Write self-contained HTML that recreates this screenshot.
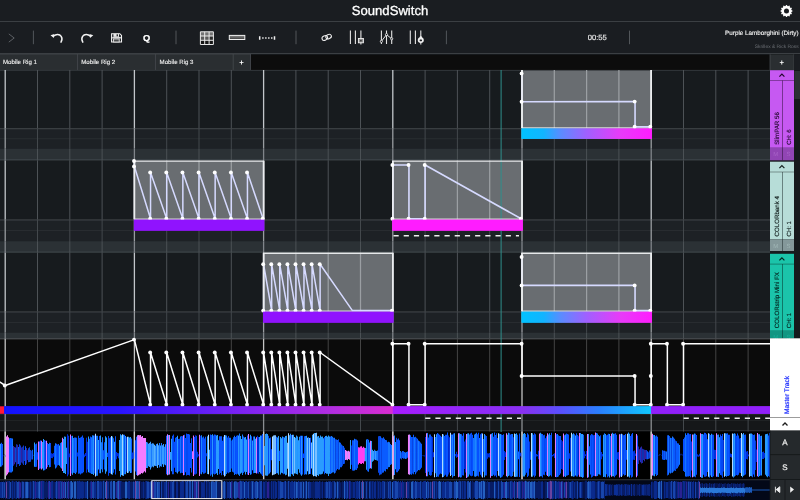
<!DOCTYPE html>
<html lang="en">
<head>
<meta charset="utf-8">
<title>SoundSwitch</title>
<style>
html,body{margin:0;padding:0;background:#171b1e;}
body{width:800px;height:500px;overflow:hidden;position:relative;font-family:"Liberation Sans",sans-serif;}
svg{position:absolute;left:0;top:0;display:block;will-change:transform;}
text{font-family:"Liberation Sans",sans-serif;text-rendering:geometricPrecision;}
</style>
</head>
<body>
<svg width="800" height="500" viewBox="0 0 800 500">
<defs>
<linearGradient id="gcm" x1="0" x2="1" y1="0" y2="0">
<stop offset="0" stop-color="#00c2ff"/><stop offset="0.17" stop-color="#12b4ff"/><stop offset="0.3" stop-color="#5a8cff"/><stop offset="0.5" stop-color="#a060ff"/><stop offset="0.75" stop-color="#e63cf8"/><stop offset="1" stop-color="#ff1cff"/>
</linearGradient>
<linearGradient id="gm1" x1="0" x2="1" y1="0" y2="0">
<stop offset="0" stop-color="#1212ff"/><stop offset="0.3" stop-color="#2a14ff"/><stop offset="0.6" stop-color="#7a22f4"/><stop offset="0.85" stop-color="#b42ee0"/><stop offset="1" stop-color="#d82cd0"/>
</linearGradient>
<linearGradient id="gm2" x1="0" x2="1" y1="0" y2="0">
<stop offset="0" stop-color="#a81cff"/><stop offset="0.5" stop-color="#9426fa"/><stop offset="1" stop-color="#8a30f4"/>
</linearGradient>
<linearGradient id="gm3" x1="0" x2="1" y1="0" y2="0">
<stop offset="0" stop-color="#8a30f0"/><stop offset="0.3" stop-color="#5a50ff"/><stop offset="0.6" stop-color="#2a80ff"/><stop offset="1" stop-color="#10c8ff"/>
</linearGradient>
<linearGradient id="gbar" x1="0" x2="0" y1="0" y2="1">
<stop offset="0" stop-color="#8a8a8a"/><stop offset="1" stop-color="#3a3a3a"/>
</linearGradient>
</defs>

<rect x="0" y="0" width="800" height="500" fill="#171b1e"/>
<rect x="0" y="0" width="800" height="54" fill="#1a1d21"/>
<rect x="0" y="21" width="800" height="1" fill="#3b3f43"/>
<rect x="0" y="54" width="800" height="1" fill="#15181b"/>
<rect x="0" y="55" width="800" height="15" fill="#0c0c0c"/>
<rect x="0" y="53" width="800" height="1" fill="#3b3f43"/>
<rect x="0" y="54.3" width="250.8" height="15.7" fill="#2a2e31"/>
<rect x="0" y="53.8" width="250.8" height="0.9" fill="#3d4145"/>
<rect x="77.15" y="54" width="0.9" height="16" fill="#43474b"/>
<rect x="154.95" y="54" width="0.9" height="16" fill="#43474b"/>
<rect x="232.75" y="54" width="0.9" height="16" fill="#43474b"/>
<rect x="249.95" y="54" width="0.9" height="16" fill="#43474b"/>
<rect x="770" y="54.5" width="24" height="15.7" fill="#2a2e31"/>
<rect x="769.6" y="54.3" width="0.9" height="16" fill="#43474b"/>
<rect x="793.4" y="54.3" width="0.8" height="16" fill="#3a3e42"/>
<rect x="794" y="54.5" width="6" height="15.5" fill="#1a1d21"/>
<rect x="0" y="70" width="770" height="58.4" fill="#171b1e"/>
<rect x="0" y="128.4" width="770" height="20.3" fill="#1d2125"/>
<rect x="0" y="148.7" width="770" height="11.9" fill="#2b3135"/>
<rect x="0" y="160.6" width="770" height="59" fill="#171b1e"/>
<rect x="0" y="219.6" width="770" height="21.6" fill="#1d2125"/>
<rect x="0" y="241.2" width="770" height="11.6" fill="#2b3135"/>
<rect x="0" y="252.8" width="770" height="58.8" fill="#171b1e"/>
<rect x="0" y="311.6" width="770" height="21" fill="#1d2125"/>
<rect x="0" y="332.6" width="770" height="6.2" fill="#2b3135"/>
<rect x="0" y="338.8" width="770" height="75" fill="#0b0b0b"/>
<rect x="0" y="414" width="770" height="17.5" fill="#151719"/>
<rect x="0" y="420.3" width="770" height="0.7" fill="#24272a"/>
<rect x="0" y="430.2" width="770" height="0.9" fill="#2c2f32"/>
<rect x="0" y="431.5" width="770" height="68.5" fill="#000"/>
<rect x="522" y="70" width="129.2" height="58.4" fill="#696d71"/>
<rect x="522" y="128.4" width="129.6" height="10.4" fill="url(#gcm)"/>
<rect x="134.4" y="160.6" width="129.2" height="59" fill="#696d71"/>
<rect x="134.4" y="219.6" width="129.6" height="11" fill="#9013fe"/>
<rect x="392.8" y="160.6" width="129.2" height="59" fill="#696d71"/>
<rect x="392.8" y="219.6" width="129.6" height="11" fill="#ff1cff"/>
<rect x="263.6" y="252.8" width="129.2" height="58.8" fill="#696d71"/>
<rect x="263.6" y="311.6" width="129.6" height="11" fill="#9013fe"/>
<rect x="522" y="252.8" width="129.2" height="58.8" fill="#696d71"/>
<rect x="522" y="311.6" width="129.6" height="11" fill="url(#gcm)"/>
<rect x="0" y="128.3" width="770" height="0.9" fill="#484d51"/>
<rect x="0" y="159.4" width="770" height="0.9" fill="#424a4e"/>
<rect x="0" y="138.4" width="770" height="0.8" fill="#2c3034"/>
<rect x="0" y="219.5" width="770" height="0.9" fill="#484d51"/>
<rect x="0" y="251.6" width="770" height="0.9" fill="#424a4e"/>
<rect x="0" y="230.2" width="770" height="0.8" fill="#2c3034"/>
<rect x="0" y="311.5" width="770" height="0.9" fill="#484d51"/>
<rect x="0" y="322.2" width="770" height="0.8" fill="#2c3034"/>
<rect x="0" y="338.4" width="770" height="0.9" fill="#5a5e62"/>
<rect x="0" y="69.9" width="770" height="0.8" fill="#3a3e42"/>
<rect x="0" y="413.8" width="770" height="0.8" fill="#2a2d30"/>
<rect x="4.55" y="70" width="1.3" height="58.4" fill="#c2c6ca"/>
<rect x="4.55" y="128.4" width="1.3" height="20.3" fill="#989ca0"/>
<rect x="4.55" y="148.7" width="1.3" height="11.9" fill="#80858a"/>
<rect x="4.55" y="160.6" width="1.3" height="59" fill="#c2c6ca"/>
<rect x="4.55" y="219.6" width="1.3" height="21.6" fill="#989ca0"/>
<rect x="4.55" y="241.2" width="1.3" height="11.6" fill="#80858a"/>
<rect x="4.55" y="252.8" width="1.3" height="58.8" fill="#c2c6ca"/>
<rect x="4.55" y="311.6" width="1.3" height="21" fill="#989ca0"/>
<rect x="4.55" y="332.6" width="1.3" height="6.2" fill="#80858a"/>
<rect x="4.55" y="338.8" width="1.3" height="75.2" fill="#c4c4c4"/>
<rect x="4.55" y="414" width="1.3" height="17.5" fill="#8a8e92"/>
<rect x="4.55" y="431.5" width="1.3" height="48" fill="#c8c8c8"/>
<rect x="37" y="70" width="1" height="58.4" fill="#4d5256"/>
<rect x="37" y="128.4" width="1" height="20.3" fill="#43484c"/>
<rect x="37" y="148.7" width="1" height="11.9" fill="#4b5155"/>
<rect x="37" y="160.6" width="1" height="59" fill="#4d5256"/>
<rect x="37" y="219.6" width="1" height="21.6" fill="#43484c"/>
<rect x="37" y="241.2" width="1" height="11.6" fill="#4b5155"/>
<rect x="37" y="252.8" width="1" height="58.8" fill="#4d5256"/>
<rect x="37" y="311.6" width="1" height="21" fill="#43484c"/>
<rect x="37" y="332.6" width="1" height="6.2" fill="#4b5155"/>
<rect x="37" y="338.8" width="1" height="75.2" fill="#444444"/>
<rect x="37" y="414" width="1" height="17.5" fill="#43484c"/>
<rect x="69.3" y="70" width="1" height="58.4" fill="#4d5256"/>
<rect x="69.3" y="128.4" width="1" height="20.3" fill="#43484c"/>
<rect x="69.3" y="148.7" width="1" height="11.9" fill="#4b5155"/>
<rect x="69.3" y="160.6" width="1" height="59" fill="#4d5256"/>
<rect x="69.3" y="219.6" width="1" height="21.6" fill="#43484c"/>
<rect x="69.3" y="241.2" width="1" height="11.6" fill="#4b5155"/>
<rect x="69.3" y="252.8" width="1" height="58.8" fill="#4d5256"/>
<rect x="69.3" y="311.6" width="1" height="21" fill="#43484c"/>
<rect x="69.3" y="332.6" width="1" height="6.2" fill="#4b5155"/>
<rect x="69.3" y="338.8" width="1" height="75.2" fill="#444444"/>
<rect x="69.3" y="414" width="1" height="17.5" fill="#43484c"/>
<rect x="101.6" y="70" width="1" height="58.4" fill="#4d5256"/>
<rect x="101.6" y="128.4" width="1" height="20.3" fill="#43484c"/>
<rect x="101.6" y="148.7" width="1" height="11.9" fill="#4b5155"/>
<rect x="101.6" y="160.6" width="1" height="59" fill="#4d5256"/>
<rect x="101.6" y="219.6" width="1" height="21.6" fill="#43484c"/>
<rect x="101.6" y="241.2" width="1" height="11.6" fill="#4b5155"/>
<rect x="101.6" y="252.8" width="1" height="58.8" fill="#4d5256"/>
<rect x="101.6" y="311.6" width="1" height="21" fill="#43484c"/>
<rect x="101.6" y="332.6" width="1" height="6.2" fill="#4b5155"/>
<rect x="101.6" y="338.8" width="1" height="75.2" fill="#444444"/>
<rect x="101.6" y="414" width="1" height="17.5" fill="#43484c"/>
<rect x="133.75" y="70" width="1.3" height="58.4" fill="#c2c6ca"/>
<rect x="133.75" y="128.4" width="1.3" height="20.3" fill="#989ca0"/>
<rect x="133.75" y="148.7" width="1.3" height="11.9" fill="#80858a"/>
<rect x="133.75" y="160.6" width="1.3" height="59" fill="#c2c6ca"/>
<rect x="133.75" y="219.6" width="1.3" height="21.6" fill="#989ca0"/>
<rect x="133.75" y="241.2" width="1.3" height="11.6" fill="#80858a"/>
<rect x="133.75" y="252.8" width="1.3" height="58.8" fill="#c2c6ca"/>
<rect x="133.75" y="311.6" width="1.3" height="21" fill="#989ca0"/>
<rect x="133.75" y="332.6" width="1.3" height="6.2" fill="#80858a"/>
<rect x="133.75" y="338.8" width="1.3" height="75.2" fill="#c4c4c4"/>
<rect x="133.75" y="414" width="1.3" height="17.5" fill="#8a8e92"/>
<rect x="133.75" y="431.5" width="1.3" height="48" fill="#c8c8c8"/>
<rect x="166.2" y="70" width="1" height="58.4" fill="#4d5256"/>
<rect x="166.2" y="128.4" width="1" height="20.3" fill="#43484c"/>
<rect x="166.2" y="148.7" width="1" height="11.9" fill="#4b5155"/>
<rect x="166.07" y="160.6" width="1.25" height="59" fill="#9b9fa3"/>
<rect x="166.2" y="219.6" width="1" height="21.6" fill="#43484c"/>
<rect x="166.2" y="241.2" width="1" height="11.6" fill="#4b5155"/>
<rect x="166.2" y="252.8" width="1" height="58.8" fill="#4d5256"/>
<rect x="166.2" y="311.6" width="1" height="21" fill="#43484c"/>
<rect x="166.2" y="332.6" width="1" height="6.2" fill="#4b5155"/>
<rect x="166.2" y="338.8" width="1" height="75.2" fill="#444444"/>
<rect x="166.2" y="414" width="1" height="17.5" fill="#43484c"/>
<rect x="198.5" y="70" width="1" height="58.4" fill="#4d5256"/>
<rect x="198.5" y="128.4" width="1" height="20.3" fill="#43484c"/>
<rect x="198.5" y="148.7" width="1" height="11.9" fill="#4b5155"/>
<rect x="198.37" y="160.6" width="1.25" height="59" fill="#9b9fa3"/>
<rect x="198.5" y="219.6" width="1" height="21.6" fill="#43484c"/>
<rect x="198.5" y="241.2" width="1" height="11.6" fill="#4b5155"/>
<rect x="198.5" y="252.8" width="1" height="58.8" fill="#4d5256"/>
<rect x="198.5" y="311.6" width="1" height="21" fill="#43484c"/>
<rect x="198.5" y="332.6" width="1" height="6.2" fill="#4b5155"/>
<rect x="198.5" y="338.8" width="1" height="75.2" fill="#444444"/>
<rect x="198.5" y="414" width="1" height="17.5" fill="#43484c"/>
<rect x="230.8" y="70" width="1" height="58.4" fill="#4d5256"/>
<rect x="230.8" y="128.4" width="1" height="20.3" fill="#43484c"/>
<rect x="230.8" y="148.7" width="1" height="11.9" fill="#4b5155"/>
<rect x="230.67" y="160.6" width="1.25" height="59" fill="#9b9fa3"/>
<rect x="230.8" y="219.6" width="1" height="21.6" fill="#43484c"/>
<rect x="230.8" y="241.2" width="1" height="11.6" fill="#4b5155"/>
<rect x="230.8" y="252.8" width="1" height="58.8" fill="#4d5256"/>
<rect x="230.8" y="311.6" width="1" height="21" fill="#43484c"/>
<rect x="230.8" y="332.6" width="1" height="6.2" fill="#4b5155"/>
<rect x="230.8" y="338.8" width="1" height="75.2" fill="#444444"/>
<rect x="230.8" y="414" width="1" height="17.5" fill="#43484c"/>
<rect x="262.95" y="70" width="1.3" height="58.4" fill="#c2c6ca"/>
<rect x="262.95" y="128.4" width="1.3" height="20.3" fill="#989ca0"/>
<rect x="262.95" y="148.7" width="1.3" height="11.9" fill="#80858a"/>
<rect x="262.95" y="160.6" width="1.3" height="59" fill="#c2c6ca"/>
<rect x="262.95" y="219.6" width="1.3" height="21.6" fill="#989ca0"/>
<rect x="262.95" y="241.2" width="1.3" height="11.6" fill="#80858a"/>
<rect x="262.95" y="252.8" width="1.3" height="58.8" fill="#c2c6ca"/>
<rect x="262.95" y="311.6" width="1.3" height="21" fill="#989ca0"/>
<rect x="262.95" y="332.6" width="1.3" height="6.2" fill="#80858a"/>
<rect x="262.95" y="338.8" width="1.3" height="75.2" fill="#c4c4c4"/>
<rect x="262.95" y="414" width="1.3" height="17.5" fill="#8a8e92"/>
<rect x="262.95" y="431.5" width="1.3" height="48" fill="#c8c8c8"/>
<rect x="295.4" y="70" width="1" height="58.4" fill="#4d5256"/>
<rect x="295.4" y="128.4" width="1" height="20.3" fill="#43484c"/>
<rect x="295.4" y="148.7" width="1" height="11.9" fill="#4b5155"/>
<rect x="295.4" y="160.6" width="1" height="59" fill="#4d5256"/>
<rect x="295.4" y="219.6" width="1" height="21.6" fill="#43484c"/>
<rect x="295.4" y="241.2" width="1" height="11.6" fill="#4b5155"/>
<rect x="295.27" y="252.8" width="1.25" height="58.8" fill="#9b9fa3"/>
<rect x="295.4" y="311.6" width="1" height="21" fill="#43484c"/>
<rect x="295.4" y="332.6" width="1" height="6.2" fill="#4b5155"/>
<rect x="295.4" y="338.8" width="1" height="75.2" fill="#444444"/>
<rect x="295.4" y="414" width="1" height="17.5" fill="#43484c"/>
<rect x="327.7" y="70" width="1" height="58.4" fill="#4d5256"/>
<rect x="327.7" y="128.4" width="1" height="20.3" fill="#43484c"/>
<rect x="327.7" y="148.7" width="1" height="11.9" fill="#4b5155"/>
<rect x="327.7" y="160.6" width="1" height="59" fill="#4d5256"/>
<rect x="327.7" y="219.6" width="1" height="21.6" fill="#43484c"/>
<rect x="327.7" y="241.2" width="1" height="11.6" fill="#4b5155"/>
<rect x="327.57" y="252.8" width="1.25" height="58.8" fill="#9b9fa3"/>
<rect x="327.7" y="311.6" width="1" height="21" fill="#43484c"/>
<rect x="327.7" y="332.6" width="1" height="6.2" fill="#4b5155"/>
<rect x="327.7" y="338.8" width="1" height="75.2" fill="#444444"/>
<rect x="327.7" y="414" width="1" height="17.5" fill="#43484c"/>
<rect x="360" y="70" width="1" height="58.4" fill="#4d5256"/>
<rect x="360" y="128.4" width="1" height="20.3" fill="#43484c"/>
<rect x="360" y="148.7" width="1" height="11.9" fill="#4b5155"/>
<rect x="360" y="160.6" width="1" height="59" fill="#4d5256"/>
<rect x="360" y="219.6" width="1" height="21.6" fill="#43484c"/>
<rect x="360" y="241.2" width="1" height="11.6" fill="#4b5155"/>
<rect x="359.87" y="252.8" width="1.25" height="58.8" fill="#9b9fa3"/>
<rect x="360" y="311.6" width="1" height="21" fill="#43484c"/>
<rect x="360" y="332.6" width="1" height="6.2" fill="#4b5155"/>
<rect x="360" y="338.8" width="1" height="75.2" fill="#444444"/>
<rect x="360" y="414" width="1" height="17.5" fill="#43484c"/>
<rect x="392.15" y="70" width="1.3" height="58.4" fill="#c2c6ca"/>
<rect x="392.15" y="128.4" width="1.3" height="20.3" fill="#989ca0"/>
<rect x="392.15" y="148.7" width="1.3" height="11.9" fill="#80858a"/>
<rect x="392.15" y="160.6" width="1.3" height="59" fill="#c2c6ca"/>
<rect x="392.15" y="219.6" width="1.3" height="21.6" fill="#989ca0"/>
<rect x="392.15" y="241.2" width="1.3" height="11.6" fill="#80858a"/>
<rect x="392.15" y="252.8" width="1.3" height="58.8" fill="#c2c6ca"/>
<rect x="392.15" y="311.6" width="1.3" height="21" fill="#989ca0"/>
<rect x="392.15" y="332.6" width="1.3" height="6.2" fill="#80858a"/>
<rect x="392.15" y="338.8" width="1.3" height="75.2" fill="#c4c4c4"/>
<rect x="392.15" y="414" width="1.3" height="17.5" fill="#8a8e92"/>
<rect x="392.15" y="431.5" width="1.3" height="48" fill="#c8c8c8"/>
<rect x="424.6" y="70" width="1" height="58.4" fill="#4d5256"/>
<rect x="424.6" y="128.4" width="1" height="20.3" fill="#43484c"/>
<rect x="424.6" y="148.7" width="1" height="11.9" fill="#4b5155"/>
<rect x="424.47" y="160.6" width="1.25" height="59" fill="#9b9fa3"/>
<rect x="424.6" y="219.6" width="1" height="21.6" fill="#43484c"/>
<rect x="424.6" y="241.2" width="1" height="11.6" fill="#4b5155"/>
<rect x="424.6" y="252.8" width="1" height="58.8" fill="#4d5256"/>
<rect x="424.6" y="311.6" width="1" height="21" fill="#43484c"/>
<rect x="424.6" y="332.6" width="1" height="6.2" fill="#4b5155"/>
<rect x="424.6" y="338.8" width="1" height="75.2" fill="#444444"/>
<rect x="424.6" y="414" width="1" height="17.5" fill="#43484c"/>
<rect x="456.9" y="70" width="1" height="58.4" fill="#4d5256"/>
<rect x="456.9" y="128.4" width="1" height="20.3" fill="#43484c"/>
<rect x="456.9" y="148.7" width="1" height="11.9" fill="#4b5155"/>
<rect x="456.77" y="160.6" width="1.25" height="59" fill="#9b9fa3"/>
<rect x="456.9" y="219.6" width="1" height="21.6" fill="#43484c"/>
<rect x="456.9" y="241.2" width="1" height="11.6" fill="#4b5155"/>
<rect x="456.9" y="252.8" width="1" height="58.8" fill="#4d5256"/>
<rect x="456.9" y="311.6" width="1" height="21" fill="#43484c"/>
<rect x="456.9" y="332.6" width="1" height="6.2" fill="#4b5155"/>
<rect x="456.9" y="338.8" width="1" height="75.2" fill="#444444"/>
<rect x="456.9" y="414" width="1" height="17.5" fill="#43484c"/>
<rect x="489.2" y="70" width="1" height="58.4" fill="#4d5256"/>
<rect x="489.2" y="128.4" width="1" height="20.3" fill="#43484c"/>
<rect x="489.2" y="148.7" width="1" height="11.9" fill="#4b5155"/>
<rect x="489.07" y="160.6" width="1.25" height="59" fill="#9b9fa3"/>
<rect x="489.2" y="219.6" width="1" height="21.6" fill="#43484c"/>
<rect x="489.2" y="241.2" width="1" height="11.6" fill="#4b5155"/>
<rect x="489.2" y="252.8" width="1" height="58.8" fill="#4d5256"/>
<rect x="489.2" y="311.6" width="1" height="21" fill="#43484c"/>
<rect x="489.2" y="332.6" width="1" height="6.2" fill="#4b5155"/>
<rect x="489.2" y="338.8" width="1" height="75.2" fill="#444444"/>
<rect x="489.2" y="414" width="1" height="17.5" fill="#43484c"/>
<rect x="521.35" y="70" width="1.3" height="58.4" fill="#c2c6ca"/>
<rect x="521.35" y="128.4" width="1.3" height="20.3" fill="#989ca0"/>
<rect x="521.35" y="148.7" width="1.3" height="11.9" fill="#80858a"/>
<rect x="521.35" y="160.6" width="1.3" height="59" fill="#c2c6ca"/>
<rect x="521.35" y="219.6" width="1.3" height="21.6" fill="#989ca0"/>
<rect x="521.35" y="241.2" width="1.3" height="11.6" fill="#80858a"/>
<rect x="521.35" y="252.8" width="1.3" height="58.8" fill="#c2c6ca"/>
<rect x="521.35" y="311.6" width="1.3" height="21" fill="#989ca0"/>
<rect x="521.35" y="332.6" width="1.3" height="6.2" fill="#80858a"/>
<rect x="521.35" y="338.8" width="1.3" height="75.2" fill="#c4c4c4"/>
<rect x="521.35" y="414" width="1.3" height="17.5" fill="#8a8e92"/>
<rect x="521.35" y="431.5" width="1.3" height="48" fill="#c8c8c8"/>
<rect x="553.67" y="70" width="1.25" height="58.4" fill="#9b9fa3"/>
<rect x="553.8" y="128.4" width="1" height="20.3" fill="#43484c"/>
<rect x="553.8" y="148.7" width="1" height="11.9" fill="#4b5155"/>
<rect x="553.8" y="160.6" width="1" height="59" fill="#4d5256"/>
<rect x="553.8" y="219.6" width="1" height="21.6" fill="#43484c"/>
<rect x="553.8" y="241.2" width="1" height="11.6" fill="#4b5155"/>
<rect x="553.67" y="252.8" width="1.25" height="58.8" fill="#9b9fa3"/>
<rect x="553.8" y="311.6" width="1" height="21" fill="#43484c"/>
<rect x="553.8" y="332.6" width="1" height="6.2" fill="#4b5155"/>
<rect x="553.8" y="338.8" width="1" height="75.2" fill="#444444"/>
<rect x="553.8" y="414" width="1" height="17.5" fill="#43484c"/>
<rect x="585.98" y="70" width="1.25" height="58.4" fill="#9b9fa3"/>
<rect x="586.1" y="128.4" width="1" height="20.3" fill="#43484c"/>
<rect x="586.1" y="148.7" width="1" height="11.9" fill="#4b5155"/>
<rect x="586.1" y="160.6" width="1" height="59" fill="#4d5256"/>
<rect x="586.1" y="219.6" width="1" height="21.6" fill="#43484c"/>
<rect x="586.1" y="241.2" width="1" height="11.6" fill="#4b5155"/>
<rect x="585.98" y="252.8" width="1.25" height="58.8" fill="#9b9fa3"/>
<rect x="586.1" y="311.6" width="1" height="21" fill="#43484c"/>
<rect x="586.1" y="332.6" width="1" height="6.2" fill="#4b5155"/>
<rect x="586.1" y="338.8" width="1" height="75.2" fill="#444444"/>
<rect x="586.1" y="414" width="1" height="17.5" fill="#43484c"/>
<rect x="618.27" y="70" width="1.25" height="58.4" fill="#9b9fa3"/>
<rect x="618.4" y="128.4" width="1" height="20.3" fill="#43484c"/>
<rect x="618.4" y="148.7" width="1" height="11.9" fill="#4b5155"/>
<rect x="618.4" y="160.6" width="1" height="59" fill="#4d5256"/>
<rect x="618.4" y="219.6" width="1" height="21.6" fill="#43484c"/>
<rect x="618.4" y="241.2" width="1" height="11.6" fill="#4b5155"/>
<rect x="618.27" y="252.8" width="1.25" height="58.8" fill="#9b9fa3"/>
<rect x="618.4" y="311.6" width="1" height="21" fill="#43484c"/>
<rect x="618.4" y="332.6" width="1" height="6.2" fill="#4b5155"/>
<rect x="618.4" y="338.8" width="1" height="75.2" fill="#444444"/>
<rect x="618.4" y="414" width="1" height="17.5" fill="#43484c"/>
<rect x="650.55" y="70" width="1.3" height="58.4" fill="#c2c6ca"/>
<rect x="650.55" y="128.4" width="1.3" height="20.3" fill="#989ca0"/>
<rect x="650.55" y="148.7" width="1.3" height="11.9" fill="#80858a"/>
<rect x="650.55" y="160.6" width="1.3" height="59" fill="#c2c6ca"/>
<rect x="650.55" y="219.6" width="1.3" height="21.6" fill="#989ca0"/>
<rect x="650.55" y="241.2" width="1.3" height="11.6" fill="#80858a"/>
<rect x="650.55" y="252.8" width="1.3" height="58.8" fill="#c2c6ca"/>
<rect x="650.55" y="311.6" width="1.3" height="21" fill="#989ca0"/>
<rect x="650.55" y="332.6" width="1.3" height="6.2" fill="#80858a"/>
<rect x="650.55" y="338.8" width="1.3" height="75.2" fill="#c4c4c4"/>
<rect x="650.55" y="414" width="1.3" height="17.5" fill="#8a8e92"/>
<rect x="650.55" y="431.5" width="1.3" height="48" fill="#c8c8c8"/>
<rect x="683" y="70" width="1" height="58.4" fill="#4d5256"/>
<rect x="683" y="128.4" width="1" height="20.3" fill="#43484c"/>
<rect x="683" y="148.7" width="1" height="11.9" fill="#4b5155"/>
<rect x="683" y="160.6" width="1" height="59" fill="#4d5256"/>
<rect x="683" y="219.6" width="1" height="21.6" fill="#43484c"/>
<rect x="683" y="241.2" width="1" height="11.6" fill="#4b5155"/>
<rect x="683" y="252.8" width="1" height="58.8" fill="#4d5256"/>
<rect x="683" y="311.6" width="1" height="21" fill="#43484c"/>
<rect x="683" y="332.6" width="1" height="6.2" fill="#4b5155"/>
<rect x="683" y="338.8" width="1" height="75.2" fill="#444444"/>
<rect x="683" y="414" width="1" height="17.5" fill="#43484c"/>
<rect x="715.3" y="70" width="1" height="58.4" fill="#4d5256"/>
<rect x="715.3" y="128.4" width="1" height="20.3" fill="#43484c"/>
<rect x="715.3" y="148.7" width="1" height="11.9" fill="#4b5155"/>
<rect x="715.3" y="160.6" width="1" height="59" fill="#4d5256"/>
<rect x="715.3" y="219.6" width="1" height="21.6" fill="#43484c"/>
<rect x="715.3" y="241.2" width="1" height="11.6" fill="#4b5155"/>
<rect x="715.3" y="252.8" width="1" height="58.8" fill="#4d5256"/>
<rect x="715.3" y="311.6" width="1" height="21" fill="#43484c"/>
<rect x="715.3" y="332.6" width="1" height="6.2" fill="#4b5155"/>
<rect x="715.3" y="338.8" width="1" height="75.2" fill="#444444"/>
<rect x="715.3" y="414" width="1" height="17.5" fill="#43484c"/>
<rect x="747.6" y="70" width="1" height="58.4" fill="#4d5256"/>
<rect x="747.6" y="128.4" width="1" height="20.3" fill="#43484c"/>
<rect x="747.6" y="148.7" width="1" height="11.9" fill="#4b5155"/>
<rect x="747.6" y="160.6" width="1" height="59" fill="#4d5256"/>
<rect x="747.6" y="219.6" width="1" height="21.6" fill="#43484c"/>
<rect x="747.6" y="241.2" width="1" height="11.6" fill="#4b5155"/>
<rect x="747.6" y="252.8" width="1" height="58.8" fill="#4d5256"/>
<rect x="747.6" y="311.6" width="1" height="21" fill="#43484c"/>
<rect x="747.6" y="332.6" width="1" height="6.2" fill="#4b5155"/>
<rect x="747.6" y="338.8" width="1" height="75.2" fill="#444444"/>
<rect x="747.6" y="414" width="1" height="17.5" fill="#43484c"/>
<rect x="521.7" y="128.4" width="130.1" height="10.4" fill="url(#gcm)"/>
<rect x="134.1" y="219.6" width="130.1" height="11" fill="#9013fe"/>
<rect x="392.5" y="219.6" width="130.1" height="11" fill="#ff1cff"/>
<rect x="263.3" y="311.6" width="130.1" height="11" fill="#9013fe"/>
<rect x="521.7" y="311.6" width="130.1" height="11" fill="url(#gcm)"/>
<rect x="500.6" y="70" width="1" height="362" fill="#2f8f8c"/>
<path d="M522 128V70M651.2 70V128" fill="none" stroke="#e6e8ea" stroke-width="1.4"/>
<path d="M522 127.9H651.2" fill="none" stroke="#f4f4f4" stroke-width="1"/>
<path d="M134.4 219.2V161.1H263.6V219.2" fill="none" stroke="#e6e8ea" stroke-width="1.4"/>
<path d="M134.4 219.1H263.6" fill="none" stroke="#f4f4f4" stroke-width="1"/>
<path d="M392.8 219.2V161.1H522V219.2" fill="none" stroke="#e6e8ea" stroke-width="1.4"/>
<path d="M392.8 219.1H522" fill="none" stroke="#f4f4f4" stroke-width="1"/>
<path d="M263.6 311.2V253.3H392.8V311.2" fill="none" stroke="#e6e8ea" stroke-width="1.4"/>
<path d="M263.6 311.1H392.8" fill="none" stroke="#f4f4f4" stroke-width="1"/>
<path d="M522 311.2V253.3H651.2V311.2" fill="none" stroke="#e6e8ea" stroke-width="1.4"/>
<path d="M522 311.1H651.2" fill="none" stroke="#f4f4f4" stroke-width="1"/>
<polyline points="134.4,161 134.4,166.5 150.55,218.8 150.55,172.5 166.7,218.8 166.7,172.5 182.85,218.8 182.85,172.5 199,218.8 199,172.5 215.15,218.8 215.15,172.5 231.3,218.8 231.3,172.5 247.45,218.8 247.45,172.5 263.1,218.8" fill="none" stroke="#d6daff" stroke-width="1.5" stroke-linejoin="round"/>
<polyline points="392.8,218.8 392.8,165" fill="none" stroke="#d6daff" stroke-width="1.5" stroke-linejoin="round"/>
<polyline points="392.8,165 408.95,165 408.95,218.8 425.1,218.8 425.1,165 521.2,218.8" fill="none" stroke="#d6daff" stroke-width="1.6" stroke-linejoin="round"/>
<polyline points="522,73.4 522,101.7 635.05,101.6 635.05,126.8 650.7,126.8" fill="none" stroke="#d6daff" stroke-width="1.6" stroke-linejoin="round"/>
<polyline points="263.6,310.6 263.6,264.3 271.67,310.6 271.67,264.3 279.75,310.6 279.75,264.3 287.82,310.6 287.82,264.3 295.9,310.6 295.9,264.3 303.97,310.6 303.97,264.3 312.05,310.6 312.05,264.3 320.12,310.6 320.12,264.3 352.42,310.6 392.3,310.6" fill="none" stroke="#d6daff" stroke-width="1.5" stroke-linejoin="round"/>
<polyline points="522,257 522,285.4 635.05,285.4 635.05,310.6 650.7,310.6" fill="none" stroke="#d6daff" stroke-width="1.6" stroke-linejoin="round"/>
<path d="M522 128V70M651.2 70V128" fill="none" stroke="#eceef0" stroke-width="1.5"/>
<path d="M134.4 219.2V160.9M263.6 160.9V219.2" fill="none" stroke="#eceef0" stroke-width="1.5"/>
<path d="M392.8 219.2V160.9M522 160.9V219.2" fill="none" stroke="#eceef0" stroke-width="1.5"/>
<path d="M263.6 311.2V253.1M392.8 253.1V311.2" fill="none" stroke="#eceef0" stroke-width="1.5"/>
<path d="M522 311.2V253.1M651.2 253.1V311.2" fill="none" stroke="#eceef0" stroke-width="1.5"/>
<circle cx="134" cy="161" r="1.95" fill="#fff"/>
<circle cx="134" cy="166.5" r="1.95" fill="#fff"/>
<circle cx="150.15" cy="218.8" r="1.95" fill="#fff"/>
<circle cx="150.15" cy="172.5" r="1.95" fill="#fff"/>
<circle cx="166.3" cy="218.8" r="1.95" fill="#fff"/>
<circle cx="166.3" cy="172.5" r="1.95" fill="#fff"/>
<circle cx="182.45" cy="218.8" r="1.95" fill="#fff"/>
<circle cx="182.45" cy="172.5" r="1.95" fill="#fff"/>
<circle cx="198.6" cy="218.8" r="1.95" fill="#fff"/>
<circle cx="198.6" cy="172.5" r="1.95" fill="#fff"/>
<circle cx="214.75" cy="218.8" r="1.95" fill="#fff"/>
<circle cx="214.75" cy="172.5" r="1.95" fill="#fff"/>
<circle cx="230.9" cy="218.8" r="1.95" fill="#fff"/>
<circle cx="230.9" cy="172.5" r="1.95" fill="#fff"/>
<circle cx="247.05" cy="218.8" r="1.95" fill="#fff"/>
<circle cx="247.05" cy="172.5" r="1.95" fill="#fff"/>
<circle cx="262.7" cy="218.8" r="1.95" fill="#fff"/>
<circle cx="392.4" cy="165" r="1.95" fill="#fff"/>
<circle cx="408.55" cy="165" r="1.95" fill="#fff"/>
<circle cx="408.55" cy="218.8" r="1.95" fill="#fff"/>
<circle cx="424.7" cy="218.8" r="1.95" fill="#fff"/>
<circle cx="424.7" cy="165" r="1.95" fill="#fff"/>
<circle cx="520.8" cy="218.8" r="1.95" fill="#fff"/>
<circle cx="392.4" cy="218.8" r="1.95" fill="#fff"/>
<circle cx="521.6" cy="73.4" r="1.95" fill="#fff"/>
<circle cx="521.6" cy="101.7" r="1.95" fill="#fff"/>
<circle cx="634.65" cy="101.6" r="1.95" fill="#fff"/>
<circle cx="634.65" cy="126.8" r="1.95" fill="#fff"/>
<circle cx="650.3" cy="126.8" r="1.95" fill="#fff"/>
<circle cx="263.2" cy="310.6" r="1.95" fill="#fff"/>
<circle cx="263.2" cy="264.3" r="1.95" fill="#fff"/>
<circle cx="271.27" cy="310.6" r="1.95" fill="#fff"/>
<circle cx="271.27" cy="264.3" r="1.95" fill="#fff"/>
<circle cx="279.35" cy="310.6" r="1.95" fill="#fff"/>
<circle cx="279.35" cy="264.3" r="1.95" fill="#fff"/>
<circle cx="287.43" cy="310.6" r="1.95" fill="#fff"/>
<circle cx="287.43" cy="264.3" r="1.95" fill="#fff"/>
<circle cx="295.5" cy="310.6" r="1.95" fill="#fff"/>
<circle cx="295.5" cy="264.3" r="1.95" fill="#fff"/>
<circle cx="303.57" cy="310.6" r="1.95" fill="#fff"/>
<circle cx="303.57" cy="264.3" r="1.95" fill="#fff"/>
<circle cx="311.65" cy="310.6" r="1.95" fill="#fff"/>
<circle cx="311.65" cy="264.3" r="1.95" fill="#fff"/>
<circle cx="319.72" cy="310.6" r="1.95" fill="#fff"/>
<circle cx="319.72" cy="264.3" r="1.95" fill="#fff"/>
<circle cx="391.9" cy="310.6" r="1.95" fill="#fff"/>
<circle cx="521.6" cy="257" r="1.95" fill="#fff"/>
<circle cx="521.6" cy="285.4" r="1.95" fill="#fff"/>
<circle cx="634.65" cy="285.4" r="1.95" fill="#fff"/>
<circle cx="634.65" cy="310.6" r="1.95" fill="#fff"/>
<circle cx="650.3" cy="310.6" r="1.95" fill="#fff"/>
<rect x="521.4" y="128.5" width="130.5" height="10.3" fill="url(#gcm)"/>
<rect x="133.8" y="219.7" width="130.5" height="10.9" fill="#9013fe"/>
<rect x="392.2" y="219.7" width="130.5" height="10.9" fill="#ff1cff"/>
<rect x="263" y="311.7" width="130.5" height="10.9" fill="#9013fe"/>
<rect x="521.4" y="311.7" width="130.5" height="10.9" fill="url(#gcm)"/>
<path d="M393.5 235.8H519" stroke="#ececec" stroke-width="1.4" stroke-dasharray="5.2 5" fill="none"/>
<rect x="0" y="406.3" width="4.4" height="7.5" fill="#ff1838"/>
<rect x="4.2" y="406.3" width="388.6" height="7.5" fill="url(#gm1)"/>
<rect x="392.8" y="406.3" width="129.2" height="7.5" fill="url(#gm2)"/>
<rect x="522" y="406.3" width="129.2" height="7.5" fill="url(#gm3)"/>
<rect x="651.2" y="406.3" width="118.8" height="7.5" fill="#9120fa"/>
<polyline points="-1,381.5 5.2,385.5 134.4,339.6 150.55,404.8 150.55,352.5 166.7,404.8 166.7,352.5 182.85,404.8 182.85,352.5 199,404.8 199,352.5 215.15,404.8 215.15,352.5 231.3,404.8 231.3,352.5 247.45,404.8 247.45,352.5 263.6,404.8 263.6,352.5 271.67,404.8 271.67,352.5 279.75,404.8 279.75,352.5 287.82,404.8 287.82,352.5 295.9,404.8 295.9,352.5 303.97,404.8 303.97,352.5 312.05,404.8 312.05,352.5 320.12,404.8 320.12,352.5 392.8,404.8 392.8,343.7 408.95,343.7 408.95,404.8 425.1,404.8 425.1,343.7 522,343.7 522,376 635.05,376 635.05,404.8 651.2,404.8 651.2,376 651.2,343.7 667.35,343.7 667.35,404.8 683.5,404.8 683.5,343.7 771,343.7" fill="none" stroke="#ffffff" stroke-width="1.5" stroke-linejoin="round"/>
<circle cx="4.8" cy="385.5" r="1.95" fill="#fff"/>
<circle cx="134" cy="339.6" r="1.95" fill="#fff"/>
<circle cx="150.15" cy="404.8" r="1.95" fill="#fff"/>
<circle cx="150.15" cy="352.5" r="1.95" fill="#fff"/>
<circle cx="166.3" cy="404.8" r="1.95" fill="#fff"/>
<circle cx="166.3" cy="352.5" r="1.95" fill="#fff"/>
<circle cx="182.45" cy="404.8" r="1.95" fill="#fff"/>
<circle cx="182.45" cy="352.5" r="1.95" fill="#fff"/>
<circle cx="198.6" cy="404.8" r="1.95" fill="#fff"/>
<circle cx="198.6" cy="352.5" r="1.95" fill="#fff"/>
<circle cx="214.75" cy="404.8" r="1.95" fill="#fff"/>
<circle cx="214.75" cy="352.5" r="1.95" fill="#fff"/>
<circle cx="230.9" cy="404.8" r="1.95" fill="#fff"/>
<circle cx="230.9" cy="352.5" r="1.95" fill="#fff"/>
<circle cx="247.05" cy="404.8" r="1.95" fill="#fff"/>
<circle cx="247.05" cy="352.5" r="1.95" fill="#fff"/>
<circle cx="263.2" cy="404.8" r="1.95" fill="#fff"/>
<circle cx="263.2" cy="352.5" r="1.95" fill="#fff"/>
<circle cx="271.27" cy="404.8" r="1.95" fill="#fff"/>
<circle cx="271.27" cy="352.5" r="1.95" fill="#fff"/>
<circle cx="279.35" cy="404.8" r="1.95" fill="#fff"/>
<circle cx="279.35" cy="352.5" r="1.95" fill="#fff"/>
<circle cx="287.43" cy="404.8" r="1.95" fill="#fff"/>
<circle cx="287.43" cy="352.5" r="1.95" fill="#fff"/>
<circle cx="295.5" cy="404.8" r="1.95" fill="#fff"/>
<circle cx="295.5" cy="352.5" r="1.95" fill="#fff"/>
<circle cx="303.57" cy="404.8" r="1.95" fill="#fff"/>
<circle cx="303.57" cy="352.5" r="1.95" fill="#fff"/>
<circle cx="311.65" cy="404.8" r="1.95" fill="#fff"/>
<circle cx="311.65" cy="352.5" r="1.95" fill="#fff"/>
<circle cx="319.72" cy="404.8" r="1.95" fill="#fff"/>
<circle cx="319.72" cy="352.5" r="1.95" fill="#fff"/>
<circle cx="392.4" cy="404.8" r="1.95" fill="#fff"/>
<circle cx="392.4" cy="343.7" r="1.95" fill="#fff"/>
<circle cx="408.55" cy="343.7" r="1.95" fill="#fff"/>
<circle cx="408.55" cy="404.8" r="1.95" fill="#fff"/>
<circle cx="424.7" cy="404.8" r="1.95" fill="#fff"/>
<circle cx="424.7" cy="343.7" r="1.95" fill="#fff"/>
<circle cx="521.6" cy="343.7" r="1.95" fill="#fff"/>
<circle cx="521.6" cy="376" r="1.95" fill="#fff"/>
<circle cx="634.65" cy="376" r="1.95" fill="#fff"/>
<circle cx="634.65" cy="404.8" r="1.95" fill="#fff"/>
<circle cx="650.8" cy="404.8" r="1.95" fill="#fff"/>
<circle cx="650.8" cy="376" r="1.95" fill="#fff"/>
<circle cx="650.8" cy="343.7" r="1.95" fill="#fff"/>
<circle cx="666.95" cy="343.7" r="1.95" fill="#fff"/>
<circle cx="666.95" cy="404.8" r="1.95" fill="#fff"/>
<circle cx="683.1" cy="404.8" r="1.95" fill="#fff"/>
<circle cx="683.1" cy="343.7" r="1.95" fill="#fff"/>
<rect x="4.2" y="406.3" width="388.6" height="7.5" fill="url(#gm1)"/>
<rect x="392.8" y="406.3" width="129.2" height="7.5" fill="url(#gm2)"/>
<rect x="522" y="406.3" width="129.2" height="7.5" fill="url(#gm3)"/>
<rect x="651.2" y="406.3" width="118.8" height="7.5" fill="#9120fa"/>
<path d="M425.2 418.2H521" stroke="#ececec" stroke-width="1.4" stroke-dasharray="5.2 5" fill="none"/>
<path d="M683.6 418.2H770" stroke="#ececec" stroke-width="1.4" stroke-dasharray="5.2 5" fill="none"/>
<path d="M0.5 443.81V466.7M34.5 442.62V466.74M42.5 441.93V468.59M43.5 438.88V470.4M59.5 445.46V465.66M61.5 442.16V468.55M63.5 438.93V473.03M65.5 436.64V473.9M66.5 447.66V464.01M72.5 435.73V474.86M88.5 436.53V472.32M93.5 435.39V475.01M98.5 440.05V469.48M100.5 435.57V473.28M106.5 437.52V471.57M114.5 441.68V469.16M119.5 439.9V470.93M121.5 435.32V475.03M123.5 434.67V475.89M125.5 435.92V474.32M128.5 436.78V472.76M129.5 437.46V471.35M130.5 436.97V473.03M168.5 435.02V474.74M170.5 451.97V459.66M171.5 438.82V471.34M177.5 435.85V473.42M207.5 436.26V473.97M209.5 449.64V459.3M212.5 434.3V476.63M216.5 435.47V473.35M217.5 435.08V475.02M218.5 440.25V469M238.5 435.53V474.85M240.5 435.98V473.7M241.5 439.06V472.69M244.5 437.43V471.74M245.5 437.07V474.53M246.5 439.51V472.03M250.5 434.66V474.85M252.5 440.56V470.33M254.5 436.48V472.97M255.5 438.82V472.98M259.5 437.04V471.9M260.5 435.54V473.44M264.5 445.9V465.29M265.5 434.04V475.48M267.5 434.01V475.64M269.5 438.16V473.5M277.5 437.56V473.3M278.5 436.05V474.64M280.5 437.08V474.43M281.5 438.13V472.74M282.5 436.45V473.17M284.5 437.51V473.82M285.5 435.9V475.15M286.5 435.85V474.63M289.5 435.34V476.46M290.5 433.65V476.44M293.5 434.75V475.95M295.5 437.67V473.61M296.5 435.47V473.94M298.5 440.35V469.28M299.5 436.73V472.7M301.5 435.86V475.78M306.5 435.66V474.42M312.5 434.83V474.64M314.5 433.07V475.97M317.5 436.44V474.91M318.5 435.96V475.93M319.5 437.83V474.16M320.5 435.58V474.43M321.5 436.82V474.29M322.5 436.59V473.76M323.5 438.29V471.48M325.5 435.88V472.96M326.5 435.74V473.65M327.5 436.71V473.8M328.5 435.6V475.88M329.5 436.46V473.68M350.5 439.94V469.02M365.5 448.06V461.13M366.5 439.41V469.8M371.5 441V468.8M395.5 442.03V469.35M454.5 433.22V475.91M459.5 433.19V476.7M468.5 433.22V476.38M484.5 433.88V477.3M507.5 434.7V477.28M508.5 432.76V476.08M515.5 433.88V477.11M524.5 433.02V476.56M540.5 432.85V476.23M575.5 435.62V475.57M581.5 433.88V476.93M582.5 434.12V477.7M588.5 434.09V477.35M599.5 436.36V474.52M603.5 434.76V477.12M609.5 433.97V477.61M613.5 433.63V476.22M629.5 433.78V477.5M654.5 435.02V476.33M711.5 433.85V477.08M719.5 437.32V473.31M734.5 433.19V476.56M750.5 433.56V476.05M751.5 433.59V476.19M761.5 435.72V475.39M765.5 434.35V474.63M766.5 434.04V476.19" stroke="#2a9cff" stroke-width="1.05" fill="none"/>
<path d="M1.5 442.87V466.61M35.5 444.37V467.09M37.5 452.2V459.64M60.5 443.11V467.58M82.5 435.62V473.24M90.5 436.59V473.3M109.5 438.3V472.94M124.5 434.67V474.19M174.5 441.73V467.71M178.5 439.07V471.63M188.5 434.03V474.97M189.5 434.5V475.38M190.5 442.93V468.08M202.5 437.45V472.25M204.5 438.41V473.56M235.5 437.03V474.12M237.5 435.24V473.77M243.5 436.43V472.88M253.5 436.41V473.36M271.5 449.24V460.18M276.5 436.76V473.15M279.5 450.64V461.08M300.5 435.66V474.53M303.5 453.53V458M324.5 436.99V474.31M438.5 433.65V476.82M439.5 434.65V474.41M440.5 435.85V473.51M441.5 436.68V473.98M472.5 434.7V475.74M477.5 434.3V475.73M478.5 432.86V476.46M497.5 437.95V470.98M510.5 434.56V476.38M519.5 433.62V477.04M527.5 433.18V476.97M530.5 451.56V459.76M545.5 438.28V471.8M559.5 436.05V475M566.5 433.5V475.8M568.5 434.42V475.04M574.5 434.34V476.47M607.5 434.72V477.14M608.5 433.85V476.31M610.5 435.9V475.26M614.5 433.68V477.28M615.5 433.24V475.63M626.5 450.05V459.63M631.5 434.24V477.57M683.5 438.91V471.1M687.5 433.32V476.38M690.5 433.97V477.18M703.5 434.6V474.76M704.5 432.8V476.63M706.5 434.19V476.35M707.5 439.23V471.95M727.5 433.28V476M738.5 435.54V474.68M740.5 437.98V473.06M745.5 434.58V474.47M753.5 435.02V474.44M760.5 436.09V475.53" stroke="#0650ff" stroke-width="1.05" fill="none"/>
<path d="M2.5 443.88V465.21M36.5 443.46V466.68M44.5 439.97V470.35M74.5 437.41V473.09M89.5 438.83V472.71M131.5 438.38V472.82M172.5 435.73V474.15M194.5 436.95V474.42M205.5 436.71V472.83M220.5 436.23V473.12M221.5 436.19V475.18M357.5 440.52V468.34M398.5 438.59V470.71M429.5 434.43V474.91M430.5 434.61V475.74M447.5 432.6V476.43M461.5 434.24V477.27M463.5 433.31V475.53M469.5 434.48V474.45M470.5 433.52V475.66M485.5 435.34V475.48M495.5 435.11V475.41M501.5 434.45V477.22M503.5 434.19V474.85M511.5 433.92V476.7M517.5 434.76V476.79M525.5 434.05V474.77M535.5 434.28V475.82M543.5 435.16V474.81M551.5 432.75V476.41M576.5 433.3V476.45M583.5 434.7V477.28M590.5 435.33V474.5M598.5 435.03V474.35M622.5 434.14V475.65M624.5 434.91V475.38M632.5 433.04V476.85M656.5 435.54V476.05M657.5 436.84V475.12M688.5 433.14V476.46M728.5 434.81V476.11M752.5 434.29V477.25M754.5 434.44V476.63M768.5 435.53V475.96" stroke="#0a58ff" stroke-width="1.05" fill="none"/>
<path d="M3.5 455.13V456.32M4.5 454.37V455.14M5.5 455.18V456.66M33.5 454.68V455.88M422.5 455.04V455.74M423.5 455.04V456.16M424.5 455.09V456.78M658.5 455.04V455.72M659.5 454.12V455.73M660.5 454.28V455.02M661.5 455.23V456.03M680.5 453.64V455.5M681.5 453.69V455.32M682.5 454.29V455.79" stroke="#061a60" stroke-width="1.05" fill="none"/>
<path d="M6.5 436.38V475.54M7.5 435.37V474.35M8.5 437.37V472.42M138.5 435.01V475.24M139.5 435.32V474.4M140.5 435.05V474.16M141.5 436.66V473.09M142.5 436.07V473.56M143.5 437.98V472.6M144.5 437.96V471.36M145.5 437.88V472.51M345.5 450.11V459.98M346.5 450.69V459.73M348.5 450.72V459.04M349.5 451.58V459.73M392.5 435.08V476.25M393.5 436.22V475.16M408.5 434.83V474.26M651.5 435.58V476.02M652.5 433.87V475.61" stroke="#f47cff" stroke-width="1.05" fill="none"/>
<path d="M9.5 438.36V472.27M10.5 437.97V472.58M11.5 438.26V472.52M18.5 447.12V464.1M25.5 446.34V465.09M32.5 449.69V459.55M39.5 441.4V468.66M40.5 440.6V468.4M330.5 436.56V474.03M333.5 437.69V472.14M336.5 439.41V470.54M337.5 439.96V468.98M340.5 442.86V467.27M341.5 444.43V467.13M343.5 445.98V463.91M380.5 436.16V474.56M382.5 438.2V472.79M383.5 437.18V472.52M384.5 438.85V470.81M385.5 439.92V471.5M386.5 440.22V469.03M387.5 442.24V469.28M390.5 443.91V465.07M402.5 450.9V458.02M403.5 451.2V458.81M404.5 452.02V458.56M406.5 452.09V458.75M407.5 451.45V457.63M410.5 435.36V474.19M411.5 437.11V474.7M413.5 434.72V474.23M415.5 436.65V474.31M417.5 438.7V471.29M419.5 441.25V470.14M420.5 442.38V469.34M421.5 443.83V467.63M647.5 451.24V459.16M650.5 451.48V457.76M662.5 450.36V459.59M664.5 450.77V459.95M673.5 437.62V471.57M674.5 438.78V470.6M676.5 441.21V468.71M677.5 443.35V468.2M678.5 443.51V466.39" stroke="#0a5cff" stroke-width="1.05" fill="none"/>
<path d="M12.5 438.58V471.59M147.5 442.59V467.96M151.5 443.75V467.43M156.5 444.06V466.16M159.5 442.88V467.49M161.5 442.88V466.71M164.5 446.85V464.44M331.5 436.03V473.23M332.5 436.86V472.47M334.5 437.87V473.62M339.5 442.19V469.48M374.5 449.75V459.58M376.5 451.01V460.28M377.5 450.56V460.75M388.5 441.83V467.25M389.5 442.33V467.11M391.5 445.09V464.37M400.5 450.94V458.54M405.5 452.42V459.08M414.5 437.24V472.02M418.5 440.42V469.92M666.5 451.45V459.83M668.5 435.23V474.72M670.5 437.85V473.54M672.5 436.45V472.64M679.5 445.07V464.76" stroke="#1778ff" stroke-width="1.05" fill="none"/>
<path d="M13.5 446V465.75M14.5 446.97V464.37M17.5 444.79V464.24M21.5 447.51V462.41M26.5 447.88V463.76M27.5 450.21V460.07M638.5 446.51V464.05M639.5 449.14V460.27M641.5 446.4V463.54M644.5 449.86V461.37M645.5 449.99V458.88" stroke="#3420a0" stroke-width="1.05" fill="none"/>
<path d="M15.5 447.6V462.16M19.5 444.21V465.94M28.5 448.18V462.2M29.5 447.26V461.95M30.5 450.11V461.63M649.5 450.49V458.57" stroke="#0a48d8" stroke-width="1.05" fill="none"/>
<path d="M16.5 444.15V466.99M22.5 446.78V463.48M31.5 450.66V459.57M642.5 448.74V463.01M643.5 449.34V460.02" stroke="#1030b0" stroke-width="1.05" fill="none"/>
<path d="M20.5 445.57V465.06M23.5 445.41V464.91M24.5 449.92V461.12M640.5 447.51V462.27M646.5 450.12V459.32M648.5 452.14V459.01" stroke="#1238c8" stroke-width="1.05" fill="none"/>
<path d="M38.5 441.53V470.05M41.5 440.65V469.56M62.5 437.8V471.05M169.5 435.12V474.47M192.5 451.23V459.09M193.5 435.4V476.01M370.5 440.76V468.14" stroke="#e070ff" stroke-width="1.05" fill="none"/>
<path d="M45.5 440.77V469.58M77.5 452.43V456.6M94.5 435.51V473.4M206.5 453.22V456.19M231.5 440.47V468.4M433.5 452.37V457.19M449.5 437.23V472.5M529.5 441.48V468.42M569.5 453.14V458.74M570.5 437.86V471.48M594.5 434.9V475.97M691.5 441.39V470.6M739.5 438.59V472.64M755.5 440.55V470.03M756.5 449.38V462.05" stroke="#0434dc" stroke-width="1.05" fill="none"/>
<path d="M46.5 440.8V468.84M70.5 434.38V475.97M167.5 434.24V475.17M183.5 435.24V475.36M199.5 434.76V476.03M248.5 434.06V474.89M256.5 437.34V473.5M426.5 433.32V476.19M458.5 433.35V477.14M466.5 433.97V477.94M490.5 434.15V477.82M506.5 433.23V476.16M539.5 433.62V476.78M547.5 433.29V476.03M555.5 433.11V477.04M563.5 433.43V476.79M579.5 433.03V476.8M587.5 434.02V477.63M595.5 432.52V476.37M611.5 433.72V476.72M619.5 434.13V477.47M636.5 434.03V477.24M692.5 434.55V477.37M700.5 433.37V477.03M716.5 433.22V476.84M757.5 433.09V476.35" stroke="#e87cff" stroke-width="1.05" fill="none"/>
<path d="M47.5 443.01V466.94M54.5 445.8V464.5M56.5 443.79V467.57M58.5 444.07V465.01M76.5 437.8V472.43M78.5 435.66V473.63M79.5 438.06V473.57M80.5 437.41V474.56M81.5 436.64V473.51M83.5 437.63V472.24M103.5 450.25V459.6M104.5 442.15V469.47M107.5 452.7V457.07M110.5 437.24V473.54M113.5 438.22V472.77M115.5 436.31V474.49M135.5 440.35V471.51M136.5 436.69V475.03M166.5 435.83V474.37M175.5 437.71V472.04M176.5 436.9V472.61M182.5 436.15V472.99M184.5 434.7V475.09M185.5 438.1V472.13M191.5 438.22V472.49M203.5 436.59V473.83M210.5 434.39V475.72M214.5 434.45V474.52M215.5 434.73V474.12M219.5 436.17V474.24M222.5 440.7V471.12M223.5 436.82V474.95M233.5 437.37V472.57M236.5 435.8V474.61M247.5 435.47V474.48M249.5 438.86V473.09M261.5 435.54V474.58M262.5 434.05V476.08M263.5 435.36V475.44M302.5 435.87V474.42M304.5 436.13V474.81M352.5 440.24V470.54M353.5 440.13V470.85M355.5 439.36V469.76M356.5 439.53V470.1M397.5 439.41V472.17M399.5 440.26V469.2M428.5 437.44V471.86M435.5 436.89V473.32M437.5 432.94V476.56M444.5 436.02V475.69M446.5 434.71V476.84M451.5 434.4V474.98M480.5 434.36V474.66M481.5 433.33V476.6M483.5 439.09V471.67M493.5 436.63V474.85M494.5 432.54V476.34M526.5 437.27V472.77M528.5 434.5V475.8M533.5 434.82V475.42M542.5 434.04V477.52M546.5 436.16V474.99M556.5 434.3V477.15M560.5 435.94V473.61M564.5 435.36V476.27M567.5 434.04V475.42M589.5 446.2V464.76M592.5 434.53V476.86M616.5 434.85V474.78M620.5 434.14V476.58M625.5 433.9V474.97M637.5 435.44V475.67M684.5 437.46V472.08M686.5 435.04V476.74M696.5 434.9V474.65M710.5 434.88V475.53M720.5 434.42V474.92M737.5 433.42V475.58" stroke="#0854ff" stroke-width="1.05" fill="none"/>
<path d="M48.5 443.97V465.12M49.5 442.71V467.23M55.5 443.3V468.38M73.5 437.91V472.83M75.5 437.51V474.09M91.5 437.17V473.9M92.5 435.33V474.05M96.5 435.64V475.78M97.5 435.84V475.8M101.5 442.2V469.3M102.5 437.27V472.3M180.5 436.55V473.31M226.5 435.42V474.08M229.5 437.69V472.35M230.5 437.69V471.91M232.5 439.6V471.7M234.5 435.83V475.08M239.5 433.57V475.94M305.5 435.99V474.26M308.5 437.2V474.47M354.5 438.84V470.52M368.5 439.67V471.87M369.5 442.4V468.67M427.5 433.12V476.14M473.5 438.07V471.01M474.5 434.39V476.49M476.5 432.65V476.25M479.5 438V471.66M492.5 433V476.08M499.5 433.73V476.35M512.5 433.99V476.12M518.5 451.51V459.28M522.5 435.54V475.43M541.5 433.83V476.26M557.5 434.02V476.94M596.5 432.97V476.3M597.5 433.49V476.08M604.5 433.21V476.84M653.5 435.11V475.86M685.5 433.27V476.48M709.5 433.82V477.56M726.5 433.45V476.78M758.5 434.22V476.91" stroke="#1474ff" stroke-width="1.05" fill="none"/>
<path d="M50.5 442.97V466.88M57.5 444.61V465.43M99.5 436.05V473.2M108.5 435.88V475.65M173.5 434.57V474.26M179.5 438.77V471.29M181.5 436.1V472.8M186.5 433.5V475.4M187.5 433.89V475.04M196.5 435.72V473.71M211.5 435.05V474.4M213.5 435.48V473.84M227.5 437.38V472.57M228.5 436.11V473.3M251.5 436.24V474.2M268.5 435.8V474.39M270.5 437.45V472.18M283.5 437.08V474.19M291.5 434.95V473.93M310.5 437.86V473.98M367.5 438.92V471.32M396.5 437.86V472.23M431.5 436.32V475.34M445.5 434.63V474.76M453.5 433.51V476.13M462.5 435.74V475.24M471.5 432.8V476.27M486.5 436.1V475.49M496.5 433.23V477.22M502.5 434.95V476.46M509.5 433.22V475.59M534.5 433.36V477.35M544.5 434.77V475.35M550.5 435.06V475.13M558.5 435.17V476.6M577.5 435.09V476.58M591.5 434.03V477.54M593.5 435.22V475.69M600.5 435.16V475.21M606.5 435.27V474.29M623.5 435.2V474.15M630.5 436.05V475.29M655.5 436.24V474.15M689.5 434.19V476.06M695.5 433.76V477.33M705.5 432.95V476.7M712.5 434.42V477.28M713.5 434.66V476.33M721.5 435.9V475.53M722.5 433.91V477.63M729.5 434.75V475.27M735.5 433.85V475.77M736.5 435.69V475.09M744.5 434.79V475.25M769.5 433.08V476.97" stroke="#0448f4" stroke-width="1.05" fill="none"/>
<path d="M51.5 453.28V457.89M52.5 453.84V458.13M53.5 453.08V456.82M84.5 454.42V457.19M85.5 453.1V456.12M116.5 451.89V459.3M117.5 452.88V456.16M118.5 453.22V458.28M132.5 452.55V459.14M133.5 450.59V458.46M134.5 452.27V458.56M197.5 451.79V457.52M198.5 454.17V456.23M455.5 454.02V456.36M456.5 451.84V457.69M457.5 454.37V457.07M487.5 453.2V458.68M488.5 453.57V457.22M489.5 453.11V457.38M504.5 451.1V459.9M505.5 452.23V457.07M520.5 452.77V456.17M521.5 452.51V457.63M536.5 454.05V456.39M537.5 454.77V456.33M538.5 450.7V459.13M552.5 454.93V456.61M553.5 454.09V455.72M554.5 453.29V457.9M584.5 451.13V458.2M585.5 454.28V455.93M586.5 451.07V459.36M601.5 452V459.15M602.5 453.98V456.43M617.5 452.28V459.2M618.5 451.88V459.96M633.5 451.24V459.85M634.5 450.38V459.96M635.5 453.44V456.02M697.5 454.13V456.58M698.5 455.24V456.73M699.5 453.86V456.31M714.5 449.68V459.12M715.5 449.96V459.59M730.5 453.6V457.09M731.5 454.06V457.41M746.5 451.49V459.11M747.5 451.01V459.55M748.5 454.53V456.27M762.5 452V458.96M763.5 451.58V458.88M764.5 453.06V457.85" stroke="#0030dc" stroke-width="1.05" fill="none"/>
<path d="M64.5 436.4V473.08M105.5 436.35V473.67M112.5 436.55V474.66M120.5 434.23V476.66M225.5 435.14V475.63M266.5 433.5V475.7M297.5 436.59V474.52M436.5 434.28V477.05M500.5 434.08V477.81M516.5 433.28V476.65M523.5 433.68V476.39M532.5 433.31V476.7M549.5 433.24V476.29M565.5 434.44V476.97M573.5 433.15V476.68M605.5 434.12V477.16M628.5 432.46V476.45M694.5 433.62V476.45M702.5 434.12V477.79M742.5 434.26V477.18M743.5 433.12V475.81M759.5 434.13V476.06" stroke="#2496ff" stroke-width="1.05" fill="none"/>
<path d="M67.5 434.24V476.16M68.5 435.81V474.4M71.5 436.03V473.38M86.5 437.73V472.71M87.5 441.82V469.54M195.5 435.24V474.59M200.5 435.83V473.86M257.5 435.81V473.17M258.5 436.94V473.71" stroke="#002cd8" stroke-width="1.05" fill="none"/>
<path d="M69.5 453.57V457.22M126.5 437.23V471.81M351.5 445.62V464.7M425.5 436.91V472.98M432.5 437.08V472.1M448.5 435.43V474.4M464.5 441.47V468.94M465.5 439.56V472.44M513.5 437.25V471.64M561.5 440.05V469.04M562.5 441.22V469.72M578.5 436.35V474.83M723.5 440.1V471.46" stroke="#0028d0" stroke-width="1.05" fill="none"/>
<path d="M95.5 433.85V476.59M111.5 436.09V474.35M127.5 436.85V473.1M208.5 434.83V474.31M224.5 435.01V476.43M272.5 436.38V475.14M288.5 433.22V476.41M313.5 433.81V476.13M434.5 434.28V477.18M442.5 433.95V477.16M450.5 432.81V476.08M482.5 433.49V477.48M498.5 433.16V475.86M514.5 433.48V476.81M531.5 432.92V476.65M571.5 432.7V476.37M627.5 433.8V476.82M708.5 433.32V476.71M724.5 433.2V476.8M732.5 433.6V476.55M741.5 433.05V475.96M749.5 433.8V476.73" stroke="#b8dcff" stroke-width="1.05" fill="none"/>
<path d="M122.5 434.29V475.45M621.5 433.66V477.1" stroke="#a8d4ff" stroke-width="1.05" fill="none"/>
<path d="M137.5 435.31V475.79M347.5 451.19V460.14M409.5 434.52V474.86" stroke="#c890ff" stroke-width="1.05" fill="none"/>
<path d="M146.5 441.98V467.88M148.5 443.67V466.23M149.5 443.04V466.94M150.5 441.8V469.4M152.5 443.29V466.59M153.5 443.43V467.21M155.5 445.63V466.04M158.5 445.23V464.93M160.5 445.54V466.23M162.5 445.13V464.15M163.5 444.12V466.99M165.5 444.18V465.36M372.5 449.8V461.67M373.5 451.08V460.75M375.5 450.81V460.06" stroke="#3a9cff" stroke-width="1.05" fill="none"/>
<path d="M154.5 444.73V465.68M157.5 443.48V468.11" stroke="#58b0ff" stroke-width="1.05" fill="none"/>
<path d="M201.5 435.17V474.27M242.5 434.62V474.94M394.5 435.56V474.91M443.5 434.48V477.02M452.5 434.42V477.44M460.5 434.06V477.44M467.5 433.49V477.31M475.5 433.87V476.68M491.5 433.78V475.99M548.5 434.51V476.65M572.5 434.16V476.2M580.5 432.98V476.63M612.5 432.78V476.16M693.5 434.51V476.64M701.5 434.11V477.76M717.5 434.7V476.65M718.5 434.56V476.93M725.5 433.14V475.94M733.5 433.64V477.46M767.5 433.87V477.23" stroke="#1c88ff" stroke-width="1.05" fill="none"/>
<path d="M273.5 435.51V474.81M274.5 435.25V474.54M275.5 435.33V474.02M287.5 442.72V468.63M292.5 434.78V474.56M294.5 437.08V473.39M307.5 437.64V471.22M309.5 437.89V474.03M311.5 442.51V468.58M315.5 433.02V476.13M316.5 432.78V476.72" stroke="#7cc0ff" stroke-width="1.05" fill="none"/>
<path d="M335.5 439.25V472.75M338.5 439.37V469.73M342.5 445.42V465.87M344.5 447.74V463.71M378.5 436.2V472.8M379.5 436V475.13M381.5 437.72V474.2M401.5 452.22V459.61M412.5 437.03V473.53M416.5 437.77V472.44M663.5 450.68V460M665.5 451.23V459.55M667.5 435.16V475.4M669.5 436.05V472.78M671.5 438V472.81M675.5 440.6V471.09" stroke="#0846e0" stroke-width="1.05" fill="none"/>
<path d="M358.5 447.33V464.46M359.5 447.47V463M360.5 446.5V463.65M361.5 446.27V463.96M362.5 447.63V463.07M363.5 446.66V463.67" stroke="#ff40f0" stroke-width="1.05" fill="none"/>
<path d="M364.5 447.74V461.32" stroke="#d050ff" stroke-width="1.05" fill="none"/>
<rect x="0" y="480" width="770" height="20" fill="#030818"/>
<path d="M0.5 481.96V498.04M1.5 481.78V498.22M3.5 481.59V498.41M9.5 480.99V499.01M12.5 480.85V499.15M14.5 481.7V498.3M16.5 481.06V498.94M28.5 482.02V497.98M30.5 481.48V498.52M34.5 481.51V498.49M36.5 481.97V498.03M37.5 481.59V498.41M40.5 481.36V498.64M42.5 480.82V499.18M43.5 481.06V498.94M51.5 481.2V498.8M52.5 481.09V498.91M55.5 481.91V498.09M57.5 481.38V498.62M60.5 480.93V499.07M77.5 481.01V498.99M78.5 481.33V498.67M79.5 480.81V499.19M80.5 481.62V498.38M81.5 481.44V498.56M82.5 481.24V498.76M83.5 481.64V498.36M85.5 481.75V498.25M86.5 481.74V498.26M90.5 481.55V498.45M94.5 482.08V497.92M95.5 481.32V498.68M99.5 481.5V498.5M100.5 481.23V498.77M101.5 481.41V498.59M107.5 481.31V498.69M108.5 481.6V498.4M120.5 480.95V499.05M127.5 482.12V497.88M128.5 481.27V498.73M129.5 481.01V498.99M134.5 481.69V498.31M143.5 481.45V498.55M146.5 481V499M149.5 481.97V498.03M156.5 481.34V498.66M164.5 482.03V497.97M165.5 481.87V498.13M170.5 481.6V498.4M171.5 481.18V498.82M176.5 481.39V498.61M177.5 481.58V498.42M180.5 481.79V498.21M181.5 481.57V498.43M182.5 481.11V498.89M183.5 481.15V498.85M185.5 481.03V498.97M197.5 481.27V498.73M201.5 482V498M202.5 482.16V497.84M203.5 482.14V497.86M204.5 481.06V498.94M206.5 481V499M209.5 481.9V498.1M225.5 481.63V498.37M227.5 481.82V498.18M228.5 481.97V498.03M229.5 481.13V498.87M242.5 481.24V498.76M243.5 481.01V498.99M245.5 481.13V498.87M246.5 481.12V498.88M247.5 482.12V497.88M251.5 480.92V499.08M253.5 481.07V498.93M254.5 482.1V497.9M258.5 481.96V498.04M259.5 480.87V499.13M263.5 481.44V498.56M264.5 481.71V498.29M271.5 480.89V499.11M273.5 481.19V498.81M275.5 481.33V498.67M276.5 481.95V498.05M278.5 480.85V499.15M279.5 481.3V498.7M283.5 482.08V497.92M284.5 481.18V498.82M290.5 482.03V497.97M291.5 481.25V498.75M292.5 481.01V498.99M293.5 481.96V498.04M295.5 481.52V498.48M298.5 481V499M299.5 481.68V498.32M305.5 481.13V498.87M309.5 481.51V498.49M310.5 482.03V497.97M315.5 481.57V498.43M316.5 481.41V498.59M317.5 481.51V498.49M318.5 482.03V497.97M319.5 480.88V499.12M322.5 481.53V498.47M325.5 482.09V497.91M328.5 481.29V498.71M330.5 481.26V498.74M331.5 481.99V498.01M338.5 481.76V498.24M345.5 481.81V498.19M346.5 480.83V499.17M350.5 481.34V498.66M353.5 481.97V498.03M354.5 481.99V498.01M356.5 481.6V498.4M357.5 481.09V498.91M358.5 481.83V498.17M370.5 481.29V498.71M372.5 481.32V498.68M374.5 481.71V498.29M375.5 481.13V498.87M378.5 481.43V498.57M380.5 481.66V498.34M382.5 480.97V499.03M383.5 480.96V499.04M389.5 481.03V498.97M393.5 481.01V498.99M394.5 480.97V499.03M398.5 481.02V498.98M399.5 482.17V497.83M400.5 480.94V499.06M402.5 480.84V499.16M403.5 482.08V497.92M407.5 481.22V498.78M408.5 481.71V498.29M413.5 481.07V498.93M414.5 481.92V498.08M417.5 481.4V498.6M418.5 481.99V498.01M419.5 482.03V497.97M422.5 481.88V498.12M423.5 481.33V498.67M424.5 480.94V499.06M425.5 480.81V499.19M427.5 481.04V498.96M433.5 481.1V498.9M436.5 481.32V498.68M442.5 482.06V497.94M443.5 480.91V499.09M444.5 482.09V497.91M446.5 481.58V498.42M447.5 481.22V498.78M448.5 481.19V498.81M458.5 481.53V498.47M459.5 480.86V499.14M462.5 480.92V499.08M464.5 481.06V498.94M465.5 481.22V498.78M474.5 482.16V497.84M478.5 481.65V498.35M482.5 481.08V498.92M488.5 482.08V497.92M489.5 481.91V498.09M495.5 481.51V498.49M503.5 482.04V497.96M507.5 481.9V498.1M508.5 481.76V498.24M511.5 480.8V499.2M512.5 481.41V498.59M516.5 481.48V498.52M520.5 481.47V498.53M523.5 481.86V498.14M529.5 480.98V499.02M541.5 481.49V498.51M542.5 481.21V498.79M552.5 480.87V499.13M553.5 481.24V498.76M556.5 481.28V498.72M557.5 481.79V498.21M558.5 481.33V498.67M569.5 481.89V498.11M571.5 481.58V498.42M572.5 480.87V499.13M574.5 482.12V497.88M579.5 482.15V497.85M581.5 481.91V498.09M591.5 481.42V498.58M592.5 480.96V499.04M593.5 480.96V499.04M594.5 481.35V498.65M597.5 481.49V498.51M599.5 481.01V498.99M651.5 481.75V498.25M654.5 480.93V499.07M655.5 480.89V499.11M656.5 481.25V498.75M660.5 481.59V498.41M664.5 481.42V498.58M666.5 481.97V498.03M667.5 481.96V498.04M670.5 481.85V498.15M675.5 481.56V498.44M677.5 481.82V498.18M679.5 482.08V497.92M683.5 480.9V499.1M684.5 481.37V498.63M689.5 481.58V498.42M692.5 482.06V497.94M693.5 481.23V498.77M698.5 480.81V499.19" stroke="#0a2a8c" stroke-width="1.05" fill="none"/>
<path d="M2.5 481.91V498.09M4.5 482.13V497.87M10.5 481.9V498.1M17.5 482.05V497.95M18.5 481.42V498.58M22.5 481.38V498.62M23.5 481.69V498.31M25.5 481.72V498.28M33.5 480.95V499.05M38.5 481.78V498.22M49.5 481.08V498.92M56.5 481.09V498.91M61.5 481.58V498.42M63.5 482.09V497.91M67.5 481.64V498.36M70.5 481.26V498.74M92.5 481.99V498.01M93.5 481.14V498.86M97.5 480.89V499.11M98.5 481.06V498.94M103.5 480.87V499.13M110.5 481.5V498.5M111.5 480.84V499.16M117.5 481.24V498.76M133.5 481.56V498.44M137.5 481.03V498.97M138.5 481.2V498.8M147.5 481.62V498.38M148.5 481.39V498.61M150.5 481.49V498.51M154.5 481.33V498.67M155.5 481.8V498.2M158.5 481.68V498.32M159.5 482.01V497.99M161.5 481.56V498.44M166.5 480.85V499.15M172.5 481.64V498.36M173.5 480.86V499.14M186.5 481.41V498.59M187.5 480.81V499.19M189.5 480.94V499.06M190.5 481.07V498.93M212.5 481.13V498.87M213.5 481.39V498.61M214.5 481.95V498.05M215.5 481.28V498.72M223.5 481.85V498.15M235.5 481.21V498.79M236.5 481.55V498.45M237.5 482.15V497.85M240.5 480.82V499.18M241.5 481.33V498.67M248.5 481.46V498.54M255.5 481.57V498.43M256.5 481.09V498.91M260.5 481.13V498.87M261.5 481.03V498.97M280.5 481.27V498.73M281.5 481.76V498.24M282.5 482.09V497.91M285.5 480.91V499.09M288.5 480.99V499.01M294.5 481.27V498.73M297.5 482.09V497.91M300.5 481.67V498.33M301.5 481.67V498.33M308.5 481.86V498.14M326.5 481.52V498.48M327.5 481.93V498.07M329.5 481.44V498.56M334.5 481.27V498.73M335.5 482.16V497.84M347.5 481.62V498.38M359.5 480.99V499.01M361.5 482.11V497.89M366.5 481.56V498.44M369.5 481.39V498.61M384.5 481.53V498.47M388.5 481.64V498.36M390.5 481.21V498.79M395.5 480.94V499.06M396.5 481.18V498.82M397.5 481.8V498.2M415.5 481.09V498.91M416.5 481.86V498.14M420.5 481.14V498.86M428.5 481.63V498.37M430.5 481.78V498.22M434.5 481.23V498.77M438.5 481.56V498.44M445.5 481.77V498.23M449.5 481.78V498.22M450.5 481.45V498.55M451.5 481.95V498.05M454.5 481.2V498.8M455.5 481.68V498.32M460.5 481.13V498.87M467.5 481.24V498.76M468.5 481.05V498.95M470.5 480.94V499.06M475.5 481.05V498.95M476.5 480.81V499.19M477.5 481.06V498.94M480.5 481.7V498.3M498.5 481.28V498.72M501.5 480.8V499.2M502.5 481.93V498.07M510.5 481.26V498.74M514.5 480.98V499.02M518.5 481.6V498.4M519.5 481.35V498.65M526.5 481.15V498.85M527.5 481.8V498.2M532.5 481.62V498.38M533.5 481.87V498.13M555.5 481.07V498.93M564.5 482.16V497.84M570.5 481.98V498.02M577.5 481.36V498.64M580.5 482.02V497.98M587.5 481.95V498.05M589.5 481.45V498.55M590.5 481.24V498.76M598.5 481.23V498.77M601.5 481.72V498.28M602.5 481.52V498.48M603.5 481.74V498.26M671.5 480.94V499.06M673.5 481.72V498.28M674.5 481.12V498.88M688.5 481.48V498.52M690.5 481.85V498.15M695.5 481.87V498.13" stroke="#1846ac" stroke-width="1.05" fill="none"/>
<path d="M5.5 480.81V499.19M7.5 480.95V499.05M8.5 480.92V499.08M11.5 481.38V498.62M13.5 481.27V498.73M15.5 481.16V498.84M21.5 481.61V498.39M24.5 481.68V498.32M29.5 481.73V498.27M31.5 481.79V498.21M32.5 480.93V499.07M44.5 481.36V498.64M45.5 481.93V498.07M46.5 481.09V498.91M47.5 482.14V497.86M53.5 481.45V498.55M54.5 481.72V498.28M66.5 480.97V499.03M69.5 481.86V498.14M73.5 480.87V499.13M76.5 481.43V498.57M84.5 481.68V498.32M96.5 481.68V498.32M102.5 481.17V498.83M104.5 480.86V499.14M112.5 481.73V498.27M115.5 481.9V498.1M121.5 480.9V499.1M122.5 481.68V498.32M123.5 481.81V498.19M124.5 481.9V498.1M130.5 481.8V498.2M131.5 481.45V498.55M132.5 481.78V498.22M141.5 481.63V498.37M142.5 481.7V498.3M144.5 482V498M145.5 480.9V499.1M162.5 481.37V498.63M163.5 481.36V498.64M167.5 481.88V498.12M174.5 481.07V498.93M188.5 481.16V498.84M191.5 481.71V498.29M193.5 480.92V499.08M207.5 481.51V498.49M208.5 481.3V498.7M210.5 482.04V497.96M217.5 481.34V498.66M218.5 482.02V497.98M219.5 482.09V497.91M220.5 481.85V498.15M222.5 481.31V498.69M232.5 480.92V499.08M233.5 482.18V497.82M249.5 480.91V499.09M250.5 481.39V498.61M265.5 480.91V499.09M266.5 480.95V499.05M269.5 481.44V498.56M272.5 481.29V498.71M274.5 480.81V499.19M286.5 481.83V498.17M287.5 481.57V498.43M289.5 481.03V498.97M302.5 480.98V499.02M304.5 481.87V498.13M307.5 482.11V497.89M311.5 482.05V497.95M312.5 482.02V497.98M313.5 480.92V499.08M314.5 482.02V497.98M320.5 481.46V498.54M321.5 481.89V498.11M324.5 482.04V497.96M332.5 481.07V498.93M333.5 480.88V499.12M336.5 481.56V498.44M339.5 480.88V499.12M340.5 482.16V497.84M342.5 481.25V498.75M343.5 481.89V498.11M348.5 481.4V498.6M351.5 481.99V498.01M352.5 481.85V498.15M355.5 480.96V499.04M365.5 481.07V498.93M367.5 480.94V499.06M371.5 481.25V498.75M373.5 481.08V498.92M377.5 480.83V499.17M379.5 480.94V499.06M381.5 482V498M385.5 481.38V498.62M386.5 481.75V498.25M387.5 481.06V498.94M404.5 481.6V498.4M405.5 481.72V498.28M409.5 481.34V498.66M421.5 481.18V498.82M429.5 482.1V497.9M431.5 481.97V498.03M435.5 481.11V498.89M437.5 481.83V498.17M441.5 481.33V498.67M452.5 481.95V498.05M453.5 481.94V498.06M461.5 481.17V498.83M463.5 481.07V498.93M472.5 480.87V499.13M473.5 481.64V498.36M485.5 481.17V498.83M486.5 482.04V497.96M487.5 480.93V499.07M490.5 481.75V498.25M491.5 481.52V498.48M492.5 481.74V498.26M493.5 481.7V498.3M496.5 481.89V498.11M497.5 480.9V499.1M499.5 481.36V498.64M500.5 481.58V498.42M509.5 481.5V498.5M515.5 481.89V498.11M521.5 481.11V498.89M535.5 481.3V498.7M536.5 481.91V498.09M537.5 481.93V498.07M538.5 481.12V498.88M539.5 481.36V498.64M540.5 481.53V498.47M545.5 481.29V498.71M546.5 481.54V498.46M554.5 481.37V498.63M563.5 481.83V498.17M567.5 481.96V498.04M568.5 481.23V498.77M573.5 481.11V498.89M575.5 481.6V498.4M576.5 481.31V498.69M582.5 481.68V498.32M585.5 480.84V499.16M586.5 480.81V499.19M595.5 481.47V498.53M596.5 481.98V498.02M600.5 481.39V498.61M604.5 480.81V499.19M652.5 481.47V498.53M653.5 482.16V497.84M657.5 482.09V497.91M665.5 481.83V498.17M668.5 481.41V498.59M669.5 481.18V498.82M672.5 481.03V498.97M676.5 481.35V498.65M682.5 480.89V499.11M685.5 481.05V498.95M687.5 481.46V498.54M691.5 481.27V498.73M696.5 482.08V497.92M697.5 482.06V497.94" stroke="#071c64" stroke-width="1.05" fill="none"/>
<path d="M6.5 481.78V498.22M106.5 480.8V499.2M135.5 480.83V499.17M139.5 481.29V498.71M198.5 481.2V498.8M362.5 480.84V499.16M406.5 481.96V498.04M432.5 481.54V498.46M517.5 481.98V498.02M550.5 480.87V499.13M551.5 481.32V498.68M566.5 481.8V498.2M699.5 481.65V498.35" stroke="#6a44a0" stroke-width="1.05" fill="none"/>
<path d="M19.5 481.54V498.46M20.5 482.13V497.87M35.5 481.23V498.77M41.5 481.05V498.95M48.5 481.17V498.83M50.5 481.91V498.09M58.5 481.25V498.75M59.5 481.15V498.85M62.5 481.15V498.85M64.5 481.14V498.86M68.5 481.04V498.96M91.5 481.16V498.84M116.5 481.96V498.04M119.5 480.85V499.15M152.5 480.97V499.03M153.5 482V498M168.5 481.79V498.21M194.5 480.94V499.06M195.5 480.83V499.17M231.5 481.33V498.67M238.5 481.89V498.11M239.5 481.2V498.8M267.5 482.04V497.96M268.5 481.59V498.41M349.5 481.04V498.96M401.5 482.15V497.85M504.5 481.88V498.12M513.5 482.16V497.84M522.5 481.15V498.85M524.5 481.35V498.65M548.5 481.69V498.31M549.5 481.31V498.69M559.5 481.5V498.5M560.5 481.68V498.32M562.5 481.3V498.7M565.5 481.68V498.32M678.5 481.71V498.29M680.5 481.84V498.16M681.5 481.97V498.03M686.5 481.48V498.52" stroke="#2a2292" stroke-width="1.05" fill="none"/>
<path d="M26.5 481.76V498.24M27.5 481.82V498.18M39.5 481.26V498.74M65.5 481.91V498.09M71.5 481.09V498.91M72.5 482.17V497.83M74.5 481.6V498.4M75.5 481.35V498.65M87.5 481V499M105.5 481.92V498.08M113.5 481.04V498.96M114.5 481.08V498.92M118.5 480.84V499.16M125.5 481.49V498.51M126.5 481.62V498.38M136.5 481.14V498.86M151.5 481.15V498.85M157.5 482.05V497.95M192.5 481.11V498.89M196.5 481.48V498.52M211.5 481.57V498.43M216.5 481.19V498.81M224.5 481.07V498.93M230.5 481.92V498.08M234.5 481.49V498.51M244.5 482.06V497.94M252.5 481.26V498.74M257.5 481.73V498.27M296.5 481.65V498.35M303.5 481.79V498.21M306.5 481.29V498.71M337.5 481.57V498.43M344.5 481.03V498.97M363.5 481.78V498.22M392.5 481.95V498.05M411.5 481.65V498.35M412.5 481.19V498.81M426.5 481.96V498.04M439.5 481.12V498.88M440.5 481.67V498.33M456.5 480.84V499.16M457.5 482.02V497.98M469.5 482.17V497.83M479.5 481.85V498.15M481.5 480.97V499.03M483.5 480.87V499.13M484.5 481.53V498.47M494.5 481.39V498.61M505.5 481.96V498.04M506.5 481.3V498.7M525.5 480.83V499.17M528.5 481.51V498.49M530.5 481.98V498.02M531.5 481.55V498.45M534.5 481.33V498.67M547.5 482.12V497.88M561.5 481.42V498.58M588.5 481.32V498.68M658.5 482.03V497.97M659.5 481.15V498.85M661.5 480.86V499.14" stroke="#2460c0" stroke-width="1.05" fill="none"/>
<path d="M88.5 481.45V498.55M89.5 482.18V497.82M109.5 481.07V498.93M140.5 481.11V498.89M160.5 482.18V497.82M169.5 481.87V498.13M175.5 481.27V498.73M178.5 481.92V498.08M179.5 481.33V498.67M184.5 482.09V497.91M199.5 481.11V498.89M200.5 481.18V498.82M205.5 481.54V498.46M221.5 482.17V497.83M226.5 481.11V498.89M262.5 481.8V498.2M270.5 481.89V498.11M277.5 481.14V498.86M323.5 482.08V497.92M341.5 482.09V497.91M360.5 480.84V499.16M364.5 481.6V498.4M368.5 481.58V498.42M376.5 481.54V498.46M391.5 481.67V498.33M410.5 481.14V498.86M466.5 481.75V498.25M471.5 481.87V498.13M543.5 482.04V497.96M544.5 481.17V498.83M578.5 482.06V497.94M583.5 481.73V498.27M584.5 481.62V498.38M662.5 481.32V498.68M663.5 481.28V498.72M694.5 481.84V498.16" stroke="#05124a" stroke-width="1.05" fill="none"/>
<path d="M605.5 484.01V495.99M606.5 484.18V495.82M609.5 484.38V495.62M614.5 484.87V495.13M615.5 484.65V495.35M616.5 484.21V495.79M617.5 484.49V495.51M621.5 484.13V495.87M625.5 484.24V495.76M629.5 484.7V495.3M631.5 484.08V495.92M642.5 484.79V495.21M643.5 484.49V495.51" stroke="#0b2f95" stroke-width="1.05" fill="none"/>
<path d="M742.5 483.75V496.25M740.5 483.3V496.7M738.5 483.95V496.05M737.5 483.26V496.74M736.5 483.88V496.12M734.5 483.56V496.44M731.5 483.09V496.91M730.5 483.92V496.08M728.5 483.31V496.69M724.5 483.52V496.48M723.5 483.7V496.3M719.5 483.21V496.79M718.5 483.76V496.24M707.5 483.78V496.22M607.5 484.04V495.96M608.5 484.46V495.54M610.5 484.27V495.73M618.5 484.04V495.96M622.5 484.17V495.83M623.5 484.82V495.18M624.5 484.11V495.89M626.5 484.04V495.96M637.5 484.39V495.61M638.5 484.75V495.25M641.5 484.62V495.38M646.5 484.26V495.74" stroke="#081c66" stroke-width="1.05" fill="none"/>
<path d="M743.5 483.36V496.64M739.5 483.75V496.25M735.5 483.81V496.19M733.5 483.5V496.5M729.5 483.92V496.08M727.5 483.83V496.17M722.5 483.89V496.11M714.5 483.31V496.69M713.5 483.76V496.24M711.5 483.68V496.32M709.5 483.03V496.97M706.5 483.14V496.86M704.5 483.68V496.32M702.5 483.32V496.68M700.5 483.85V496.15M611.5 484.82V495.18M619.5 484.23V495.77M620.5 484.85V495.15M627.5 484.6V495.4M628.5 484.47V495.53M633.5 484.47V495.53M634.5 484.07V495.93M639.5 484.02V495.98M644.5 484.47V495.53M645.5 484.58V495.42M647.5 484.4V495.6M648.5 484.22V495.78M649.5 484.07V495.93" stroke="#0a2478" stroke-width="1.05" fill="none"/>
<path d="M744.5 483.69V496.31M741.5 483.82V496.18M732.5 483.36V496.64M726.5 483.93V496.07M725.5 483.01V496.99M721.5 483.11V496.89M720.5 483.54V496.46M717.5 483.18V496.82M716.5 483.31V496.69M715.5 483.19V496.81M712.5 483.52V496.48M710.5 483.49V496.51M708.5 483.89V496.11M705.5 483.02V496.98M703.5 483.93V496.07M701.5 483.07V496.93M612.5 484.11V495.89M613.5 484.83V495.17M630.5 484.33V495.67M632.5 484.29V495.71M635.5 484.4V495.6M636.5 484.09V495.91M640.5 484.03V495.97M650.5 484.66V495.34" stroke="#06144a" stroke-width="1.05" fill="none"/>
<path d="M745.5 487.38V492.62M746.5 487.29V492.71M747.5 487.33V492.67M748.5 487.38V492.62M749.5 487.04V492.96M750.5 487.44V492.56M751.5 487.14V492.86M752.5 489.44V490.56M753.5 489.42V490.58M754.5 489.43V490.57M755.5 489.42V490.58M756.5 489.43V490.57M757.5 489.44V490.56M758.5 489.42V490.58M759.5 489.48V490.52M760.5 489.43V490.57M761.5 489.43V490.57M762.5 489.44V490.56M763.5 489.45V490.55M764.5 489.42V490.58M765.5 489.48V490.52M766.5 489.47V490.53M767.5 489.41V490.59M768.5 489.49V490.51M769.5 489.48V490.52" stroke="#1a58b8" stroke-width="1.05" fill="none"/>
<path d="M700.5 487.46V492.95M701.5 488.08V492.45M702.5 487.41V493.11M703.5 487.99V492.61M704.5 487.53V492.79M705.5 488.04V492.51M706.5 487.47V493.05M707.5 488.09V492.77M708.5 488.11V492.69M709.5 487.57V493.24M710.5 487.78V492.87M711.5 487.72V492.61M712.5 487.84V492.99M713.5 487.63V493.18M714.5 487.76V492.93M715.5 487.93V493.08M716.5 487.9V493.15M717.5 487.67V493.07M718.5 487.91V492.8M719.5 487.91V492.86M720.5 488.03V493.29M721.5 487.5V492.83M722.5 488.04V492.54M723.5 487.49V492.82M724.5 487.48V492.83M725.5 487.88V492.77M726.5 487.92V493.07M727.5 487.65V493M728.5 488V492.98M729.5 487.93V493.04M730.5 487.84V493.39M731.5 487.48V492.5M732.5 487.99V492.98M733.5 487.55V492.65M734.5 488.14V492.77M735.5 488.04V492.99M736.5 487.42V493.15M737.5 487.94V493.27M738.5 488.04V492.38M739.5 487.91V492.76M740.5 487.78V492.88M741.5 487.9V492.72M742.5 487.7V493.11M743.5 487.68V492.52M744.5 488.16V493.3" stroke="#2a78d8" stroke-width="1.05" fill="none"/>
<rect x="151.8" y="480.6" width="70" height="18" fill="none" stroke="#f4f4f4" stroke-width="1"/>
<rect x="4.6" y="431.5" width="1.2" height="48" fill="#d0d0d0" opacity="0.85"/>
<rect x="133.8" y="431.5" width="1.2" height="48" fill="#d0d0d0" opacity="0.85"/>
<rect x="263" y="431.5" width="1.2" height="48" fill="#d0d0d0" opacity="0.85"/>
<rect x="392.2" y="431.5" width="1.2" height="48" fill="#d0d0d0" opacity="0.85"/>
<rect x="521.4" y="431.5" width="1.2" height="48" fill="#d0d0d0" opacity="0.85"/>
<rect x="650.6" y="431.5" width="1.2" height="48" fill="#d0d0d0" opacity="0.85"/>
<rect x="0" y="479.3" width="770" height="0.9" fill="#3a3e42"/>
<g id="toolbar">
<path d="M8.8 33.9L14.2 38L8.8 42.1" fill="none" stroke="#63676b" stroke-width="0.9"/>
<rect x="32.9" y="30.6" width="1" height="13.6" fill="#52565a"/>
<rect x="175.5" y="30.6" width="1" height="13.6" fill="#52565a"/>
<rect x="295.5" y="30.6" width="1" height="13.6" fill="#52565a"/>
<rect x="445.9" y="30.6" width="1" height="13.6" fill="#52565a"/>
<rect x="629" y="30.6" width="1" height="13.6" fill="#52565a"/>
<path d="M53.4 36.2C55.6 34.2 59.4 33.6 61.2 36.4C62.5 38.4 62 40.4 61 42.1" fill="none" stroke="#f2f2f2" stroke-width="1.5" stroke-linecap="round"/>
<path d="M50.5 35.3L54.3 34.1L53.8 38.1Z" fill="#f2f2f2"/>
<path d="M90.4 36.2C88.2 34.2 84.4 33.6 82.6 36.4C81.3 38.4 81.8 40.4 82.8 42.1" fill="none" stroke="#f2f2f2" stroke-width="1.5" stroke-linecap="round"/>
<path d="M93.3 35.3L89.5 34.1L90 38.1Z" fill="#f2f2f2"/>
<path d="M111.6 33.7H119.8L121.5 35.4V42H111.6Z" fill="#1a1d21" stroke="#f2f2f2" stroke-width="1.1"/>
<rect x="113.4" y="33.7" width="5.6" height="3.2" fill="#e8e8e8"/>
<rect x="116.6" y="34.3" width="1.3" height="2" fill="#1a1d21"/>
<rect x="112.2" y="36.9" width="8.7" height="1.6" fill="#d8d8d8"/>
<rect x="113.6" y="38.9" width="5.6" height="3.1" fill="#4a4c4e" stroke="#e8e8e8" stroke-width="0.9"/>
<text transform="translate(146.5 40.9) scale(1.08 1)" font-size="8.6" font-weight="bold" fill="#fff" stroke="#fff" stroke-width="0.25" text-anchor="middle">Q</text>
<rect x="200.2" y="31.7" width="13.2" height="4.4" fill="#747474"/>
<rect x="200.2" y="36" width="13.2" height="4.4" fill="#5a5a5a"/>
<rect x="209" y="36" width="4.4" height="4.4" fill="#2c2c2c"/>
<rect x="200.2" y="40.3" width="13.2" height="4.2" fill="#161616"/>
<path d="M200.4 31.8H213.4V44.5H200.4ZM204.7 31.8V44.5M209.1 31.8V44.5M200.4 36H213.4M200.4 40.3H213.4" fill="none" stroke="#f0f0f0" stroke-width="0.95"/>
<rect x="229.3" y="35.4" width="15.5" height="4.1" fill="url(#gbar)" stroke="#f0f0f0" stroke-width="1"/>
<path d="M259.7 36.2V39.7M274.5 36.2V39.7" stroke="#f0f0f0" stroke-width="1.5"/>
<path d="M262.2 38H272.5" stroke="#f0f0f0" stroke-width="1.3" stroke-dasharray="1.4 1.55"/>
<g fill="none" stroke="#ececec" stroke-width="1.05"><ellipse cx="324.8" cy="38" rx="2.9" ry="2.15" transform="rotate(-25 324.8 38)"/><ellipse cx="328.6" cy="36.6" rx="2.9" ry="2.15" transform="rotate(-25 328.6 36.6)"/></g>
<path d="M350.4 30.6V44M355.4 30.6V44M360.9 30.6V44.4" stroke="#e4e4e4" stroke-width="1.1"/>
<rect x="358.4" y="38.5" width="5" height="4.3" fill="#8a8a8a" stroke="#f0f0f0" stroke-width="0.9"/>
<rect x="360.2" y="40" width="1.4" height="1.4" fill="#2a2a2a"/>
<path d="M381.4 30.6V44M386.5 30.6V44M391.7 30.6V44" stroke="#e4e4e4" stroke-width="1.1"/>
<path d="M381.4 41.4L386.5 34.6L391.7 38.8" fill="none" stroke="#e4e4e4" stroke-width="1"/>
<circle cx="381.4" cy="41.4" r="1.1" fill="#1a1d21" stroke="#f0f0f0" stroke-width="0.8"/>
<circle cx="386.5" cy="34.6" r="1.1" fill="#1a1d21" stroke="#f0f0f0" stroke-width="0.8"/>
<circle cx="391.7" cy="38.8" r="1.1" fill="#1a1d21" stroke="#f0f0f0" stroke-width="0.8"/>
<path d="M410.3 30.6V44M415.4 30.6V44M420.8 30.6V44.6" stroke="#e4e4e4" stroke-width="1.1"/>
<path d="M419.4 37.6L420.1 36.2H421.5L422.2 37.6C423.6 38.2 423.8 39.4 423.8 40.6C423.8 42.2 422.6 43 420.8 43C419 43 417.8 42.2 417.8 40.6C417.8 39.4 418 38.2 419.4 37.6Z" fill="#f0f0f0"/>
<rect x="419.6" y="39.6" width="2.4" height="1.6" rx="0.6" fill="#1a1d21"/>
</g>
<path d="M792.59 10.69 L792.59 11.31 L791.39 12.05 L791.26 12.54 L791.93 13.78 L791.62 14.31 L790.21 14.35 L789.85 14.71 L789.81 16.12 L789.28 16.43 L788.04 15.76 L787.55 15.89 L786.81 17.09 L786.19 17.09 L785.45 15.89 L784.96 15.76 L783.72 16.43 L783.19 16.12 L783.15 14.71 L782.79 14.35 L781.38 14.31 L781.07 13.78 L781.74 12.54 L781.61 12.05 L780.41 11.31 L780.41 10.69 L781.61 9.95 L781.74 9.46 L781.07 8.22 L781.38 7.69 L782.79 7.65 L783.15 7.29 L783.19 5.88 L783.72 5.57 L784.96 6.24 L785.45 6.11 L786.19 4.91 L786.81 4.91 L787.55 6.11 L788.04 6.24 L789.28 5.57 L789.81 5.88 L789.85 7.29 L790.21 7.65 L791.62 7.69 L791.93 8.22 L791.26 9.46 L791.39 9.95 Z M789 11A2.5 2.5 0 1 0 784 11A2.5 2.5 0 1 0 789 11Z" fill="#fff" fill-rule="evenodd"/>
<text x="390" y="15.4" font-size="13.1" fill="#fff" stroke="#fff" stroke-width="0.3" text-anchor="middle">SoundSwitch</text>
<text x="597.3" y="39.7" font-size="7.6" fill="#f0f0f0" stroke="#f0f0f0" stroke-width="0.15" text-anchor="middle">00:55</text>
<text x="798.6" y="35.2" font-size="6.3" fill="#f4f4f4" stroke="#f4f4f4" stroke-width="0.12" text-anchor="end">Purple Lamborghini (Dirty)</text>
<text x="798.6" y="48.1" font-size="4.9" fill="#6c7075" text-anchor="end">Skrillex &amp; Rick Ross</text>
<text x="3" y="63.8" font-size="6.1" fill="#ececec" stroke="#ececec" stroke-width="0.12">Mobile Rig 1</text>
<text x="81.3" y="63.8" font-size="6.1" fill="#ececec" stroke="#ececec" stroke-width="0.12">Mobile Rig 2</text>
<text x="159.6" y="63.8" font-size="6.1" fill="#ececec" stroke="#ececec" stroke-width="0.12">Mobile Rig 3</text>
<text x="241.6" y="64.7" font-size="7.8" font-weight="bold" fill="#fff" text-anchor="middle">+</text>
<text x="781.7" y="64.8" font-size="7.8" font-weight="bold" fill="#fff" text-anchor="middle">+</text>
<rect x="794" y="70" width="6" height="270" fill="#16191c"/>
<rect x="794.3" y="71" width="5.7" height="28" fill="#2c3034"/>
<rect x="770" y="70.2" width="24" height="77.6" fill="#c659f2"/>
<rect x="770" y="147.8" width="24" height="12.5" fill="#9145b4"/>
<rect x="782.2" y="80.5" width="0.8" height="79.8" fill="#21082c" opacity="0.6"/>
<rect x="770" y="80.1" width="24" height="0.8" fill="#21082c" opacity="0.5"/>
<path d="M779.4 76.7L781.9 74.2L784.4 76.7" fill="none" stroke="#21082c" stroke-width="1.2"/>
<text transform="translate(779.2 144.8) rotate(-90)" font-size="6.15" fill="#21082c" stroke="#21082c" stroke-width="0.15">SlimPAR 56</text>
<text transform="translate(791.4 144.8) rotate(-90)" font-size="6" fill="#21082c" stroke="#21082c" stroke-width="0.15">CH: 6</text>
<text x="775.8" y="156.2" font-size="6" fill="#a862c8" text-anchor="middle">M</text>
<text x="788.4" y="156.2" font-size="6" fill="#a862c8" text-anchor="middle">S</text>
<rect x="770" y="161.7" width="24" height="77.7" fill="#b7ddd8"/>
<rect x="770" y="239.4" width="24" height="11.6" fill="#84989a"/>
<rect x="782.2" y="172" width="0.8" height="79" fill="#14201f" opacity="0.6"/>
<rect x="770" y="171.6" width="24" height="0.8" fill="#14201f" opacity="0.5"/>
<path d="M779.4 168.2L781.9 165.7L784.4 168.2" fill="none" stroke="#14201f" stroke-width="1.2"/>
<text transform="translate(779.2 236.4) rotate(-90)" font-size="6.15" fill="#14201f" stroke="#14201f" stroke-width="0.15">COLORbank 4</text>
<text transform="translate(791.4 236.4) rotate(-90)" font-size="6" fill="#14201f" stroke="#14201f" stroke-width="0.15">CH: 1</text>
<text x="775.8" y="247.8" font-size="6" fill="#a0b6b6" text-anchor="middle">M</text>
<text x="788.4" y="247.8" font-size="6" fill="#a0b6b6" text-anchor="middle">S</text>
<rect x="770" y="253.8" width="24" height="77" fill="#1bc4aa"/>
<rect x="770" y="330.8" width="24" height="7.7" fill="#129682"/>
<rect x="782.2" y="264.1" width="0.8" height="74.4" fill="#04241f" opacity="0.6"/>
<rect x="770" y="263.7" width="24" height="0.8" fill="#04241f" opacity="0.5"/>
<path d="M779.4 260.3L781.9 257.8L784.4 260.3" fill="none" stroke="#04241f" stroke-width="1.2"/>
<text transform="translate(779.2 328.2) rotate(-90)" font-size="6.15" fill="#04241f" stroke="#04241f" stroke-width="0.15">COLORstrip Mini FX</text>
<text transform="translate(791.4 328.2) rotate(-90)" font-size="6" fill="#04241f" stroke="#04241f" stroke-width="0.15">CH: 1</text>
<text x="775.8" y="339.2" font-size="6" fill="#17ad96" text-anchor="middle">M</text>
<text x="788.4" y="339.2" font-size="6" fill="#17ad96" text-anchor="middle">S</text>
<rect x="770" y="338.3" width="30" height="92.3" fill="#fff"/>
<rect x="770" y="417" width="30" height="1" fill="#9c9c9c"/>
<path d="M782.5 425.5L785 423L787.5 425.5" fill="none" stroke="#1c1c1c" stroke-width="1.3"/>
<text transform="translate(788.7 414) rotate(-90)" font-size="6.6" fill="#1c2cff" stroke="#1c2cff" stroke-width="0.2">Master Track</text>
<rect x="770" y="430.6" width="30" height="69.4" fill="#25292c"/>
<rect x="770" y="454.2" width="30" height="0.9" fill="#15181a"/>
<rect x="770" y="479" width="30" height="0.9" fill="#15181a"/>
<rect x="769.6" y="430.6" width="0.9" height="69.4" fill="#15181a"/>
<rect x="784.6" y="480" width="0.8" height="20" fill="#15181a"/>
<text x="785" y="445.1" font-size="8" fill="#ececec" stroke="#ececec" stroke-width="0.25" text-anchor="middle">A</text>
<text x="785" y="469.9" font-size="8" fill="#ececec" stroke="#ececec" stroke-width="0.25" text-anchor="middle">S</text>
<path d="M775.4 486.7V492.5M779.8 486.7V492.5L776.2 489.6Z" fill="#f0f0f0" stroke="#f0f0f0" stroke-width="0.9"/>
<path d="M790.2 486.5V492.7L794 489.6Z" fill="#f0f0f0"/>
</svg>
</body>
</html>
